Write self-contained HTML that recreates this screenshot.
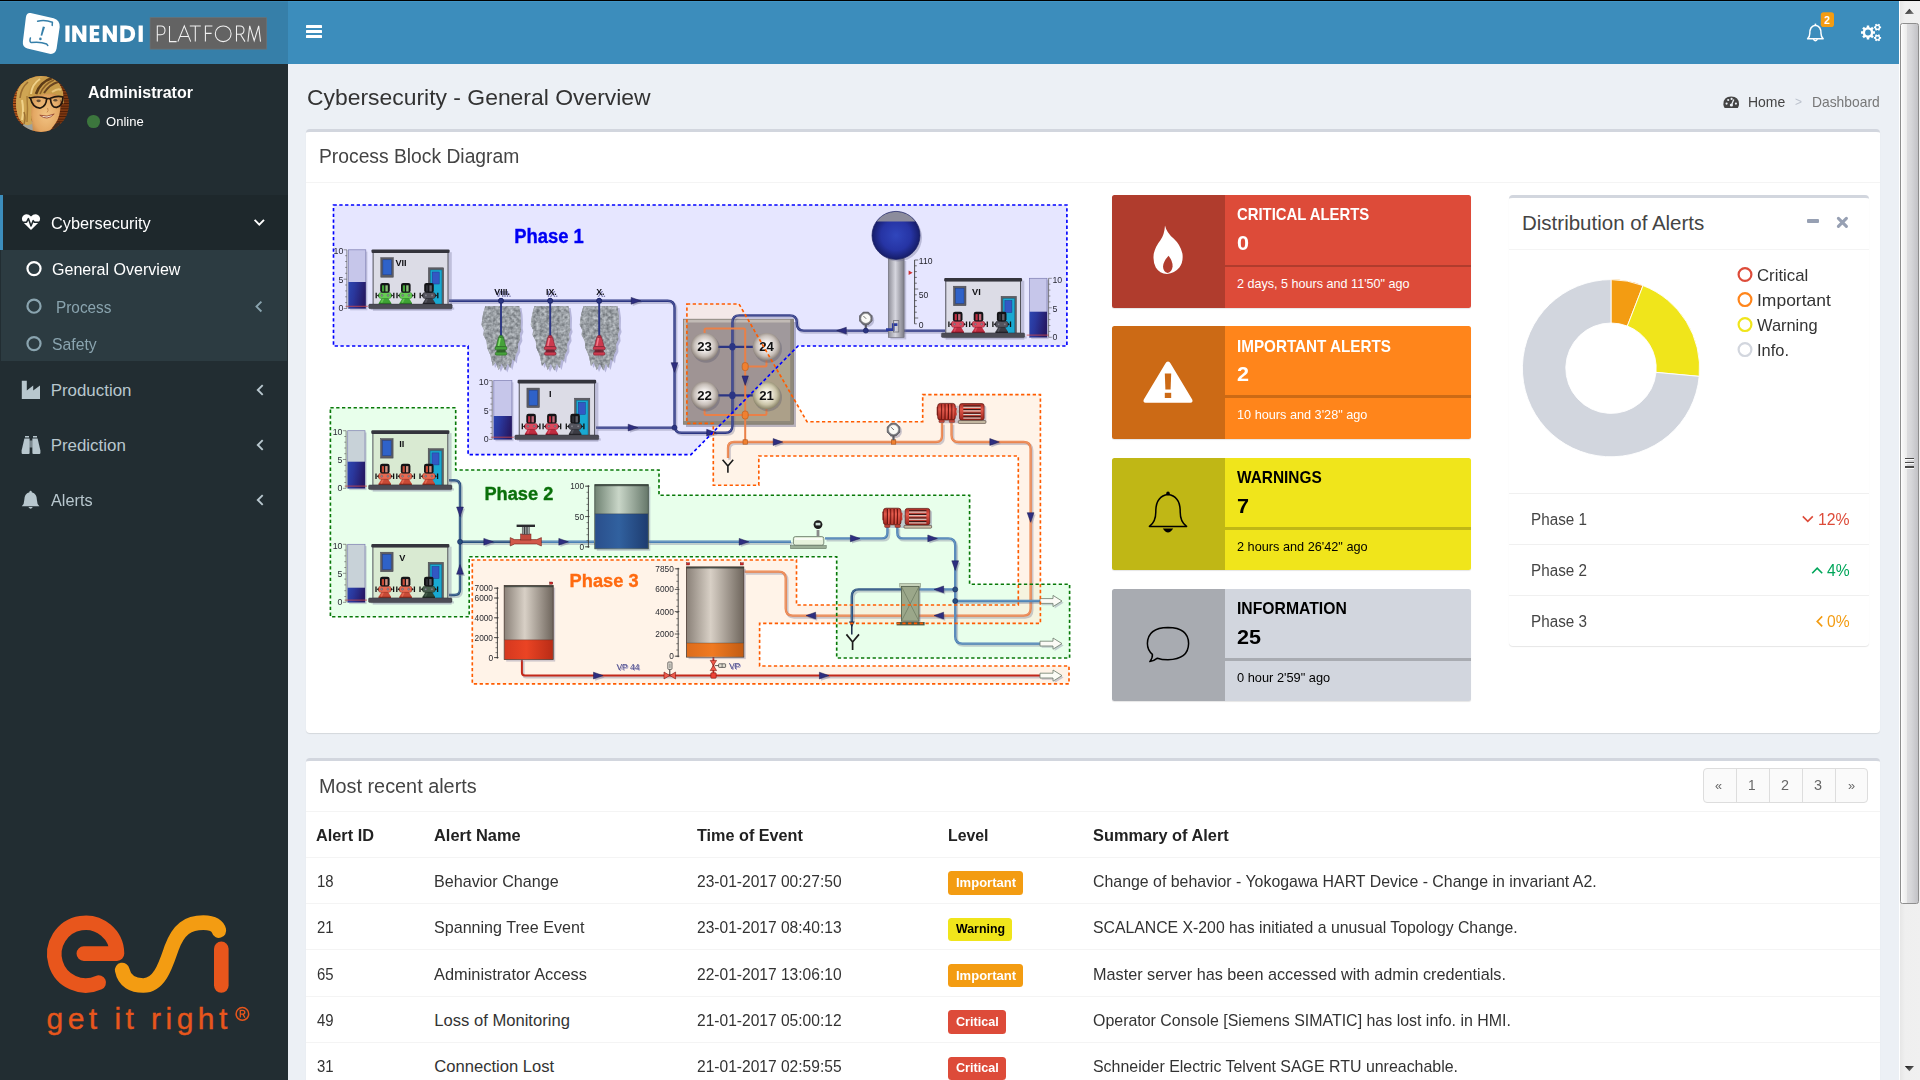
<!DOCTYPE html>
<html lang="en"><head><meta charset="utf-8"><title>INENDI Platform - Cybersecurity</title>
<style>
html,body{margin:0;padding:0;}
body{width:1920px;height:1080px;overflow:hidden;position:relative;background:#ecf0f5;font-family:"Liberation Sans",sans-serif;}
.t{position:absolute;white-space:pre;line-height:1;transform-origin:0 50%;display:block;}
.r{position:absolute;}
svg{position:absolute;left:0;top:0;overflow:visible;}
</style></head>
<body>
<div class="r" style="left:0.00px;top:0.00px;width:1899.00px;height:64.00px;background:#3c8dbc;"></div>
<div class="r" style="left:0.00px;top:0.00px;width:288.00px;height:64.00px;background:#367fa9;"></div>
<div class="r" style="left:288.00px;top:1.00px;width:1611.00px;height:1.00px;background:#4196c7;"></div>
<div class="r" style="left:0.00px;top:1.00px;width:288.00px;height:1.00px;background:#3b88b5;"></div>
<div class="r" style="left:0.00px;top:64.00px;width:288.00px;height:1016.00px;background:#222d32;"></div>
<div class="r" style="left:0.00px;top:195.00px;width:288.00px;height:55.00px;background:#1e282c;"></div>
<div class="r" style="left:0.00px;top:195.00px;width:3.00px;height:55.00px;background:#3c8dbc;"></div>
<div class="r" style="left:1.25px;top:250.00px;width:285.50px;height:111.40px;background:#2c3b41;"></div>
<div class="r" style="left:306.00px;top:129.00px;width:1574.00px;height:603.50px;background:#fff;border-radius:4px;box-shadow:0 1px 1px rgba(0,0,0,0.1);border-top:3px solid #d2d6de;box-sizing:border-box;"></div>
<div class="r" style="left:306.00px;top:182.00px;width:1574.00px;height:1.00px;background:#f4f4f4;"></div>
<div class="r" style="left:306.00px;top:758.00px;width:1574.00px;height:340.00px;background:#fff;border-radius:4px;box-shadow:0 1px 1px rgba(0,0,0,0.1);border-top:3px solid #d2d6de;box-sizing:border-box;"></div>
<div class="r" style="left:306.00px;top:811.00px;width:1574.00px;height:1.00px;background:#f4f4f4;"></div>
<div class="r" style="left:1508.50px;top:195.00px;width:360.00px;height:451.00px;background:#fff;border-radius:4px;box-shadow:0 1px 1px rgba(0,0,0,0.1);border-top:3px solid #d2d6de;box-sizing:border-box;"></div>
<div class="r" style="left:1508.50px;top:248.50px;width:360.00px;height:1.00px;background:#f4f4f4;"></div>
<div class="r" style="left:1508.50px;top:493.30px;width:360.00px;height:1.00px;background:#f0f0f0;"></div>
<div class="r" style="left:1508.50px;top:544.30px;width:360.00px;height:1.00px;background:#f0f0f0;"></div>
<div class="r" style="left:1508.50px;top:595.30px;width:360.00px;height:1.00px;background:#f0f0f0;"></div>
<svg width="1920" height="1080" viewBox="0 0 1920 1080"><path d="M30.6 13.1 L53.6 18.2 Q59.9 19.8 59.7 27 L56.6 48.6 Q55.4 54.6 49.6 53.8 L27.4 48.6 Q22.2 47.2 22.9 41.6 L25.9 17.2 Q26.8 12.4 30.6 13.1 Z" fill="#fff"/><path d="M37.6 21.2 Q45 19.6 52.4 22.2 L52.2 25.4" stroke="#367fa9" stroke-width="1.5" fill="none" stroke-linecap="round" stroke-linejoin="round"/><path d="M30.4 38 Q29.2 42 31.2 42.6 Q40 41.4 46.6 44 L47.8 45.4" stroke="#367fa9" stroke-width="1.5" fill="none" stroke-linecap="round" stroke-linejoin="round"/><path d="M42.8 26.6 L40.6 35.6 L42.2 35.8 L45 26.9 Z" fill="#367fa9"/><circle cx="40.4" cy="38.9" r="1.3" fill="#367fa9"/><g fill="#fff"><rect x="65.4" y="25.5" width="4.1" height="16.4"/><path d="M72.2 41.9 V25.5 H76.3 L82.30000000000001 35.1 V25.5 H86.4 V41.9 H82.30000000000001 L76.3 32.3 V41.9 Z"/><path d="M89.8 25.5 H99.3 V29.1 H93.89999999999999 V31.9 H98.7 V35.5 H93.89999999999999 V38.3 H99.3 V41.9 H89.8 Z"/><path d="M102.7 41.9 V25.5 H106.8 L112.80000000000001 35.1 V25.5 H116.9 V41.9 H112.80000000000001 L106.8 32.3 V41.9 Z"/><path fill-rule="evenodd" d="M120.3 25.5 H125.89999999999999 Q135.2 25.5 135.2 33.7 Q135.2 41.9 125.89999999999999 41.9 H120.3 Z M124.39999999999999 29.2 V38.199999999999996 H126.1 Q130.89999999999998 38.199999999999996 130.89999999999998 33.7 Q130.89999999999998 29.2 126.1 29.2 Z"/><rect x="138.6" y="25.5" width="4.2" height="16.4"/></g><rect x="150.1" y="17.7" width="116.4" height="31.4" fill="#636363" stroke="#707070" stroke-width="0.7"/><g fill="none" stroke="#f2f2f2" stroke-width="1.05" stroke-linejoin="miter"><path d="M157.3 41.6 V25.9 H161 Q165 25.9 165 30.299999999999997 Q165 34.7 161 34.7 H157.3"/><path d="M169.5 25.9 V41.6 H176.6"/><path d="M177.9 41.6 L184.3 25.9 L190.7 41.6 M180.1 36.4 H188.5"/><path d="M189.8 25.9 H200.8 M195.3 25.9 V41.6"/><path d="M205.4 41.6 V25.9 H212.4 M205.4 33.35 H211.6"/><ellipse cx="223.2" cy="33.75" rx="7.9" ry="7.850000000000001"/><path d="M236.5 41.6 V25.9 H240 Q244 25.9 244 30.099999999999998 Q244 34.3 240 34.3 H236.5 M240.4 34.3 L245 41.6"/><path d="M247.9 41.6 L249.7 25.9 L254.2 40.6 L258.7 25.9 L260.5 41.6"/></g></svg>
<div class="r" style="left:306.00px;top:25.00px;width:16.00px;height:3.00px;background:#fff;border-radius:.6px;"></div>
<div class="r" style="left:306.00px;top:30.00px;width:16.00px;height:3.00px;background:#fff;border-radius:.6px;"></div>
<div class="r" style="left:306.00px;top:35.00px;width:16.00px;height:3.00px;background:#fff;border-radius:.6px;"></div>
<svg width="1920" height="1080" viewBox="0 0 1920 1080"><g fill="none" stroke="#fff" stroke-width="1.5" stroke-linejoin="round"><path d="M1815.4 25.2 Q1809.6 26.2 1809.8 33.5 Q1809.8 36.8 1807.6 38.7 L1823.2 38.7 Q1821 36.8 1821 33.5 Q1821.2 26.2 1815.4 25.2 Z"/><path d="M1813.4 39.2 Q1815.4 42.2 1817.4 39.2" /></g><rect x="1814.7" y="23.6" width="1.5" height="2" fill="#fff"/><rect x="1820.8" y="12.2" width="13.2" height="14.8" rx="2.8" fill="#f39c12"/><path d="M1874.99 31.28 L1874.99 33.72 L1873.25 33.76 L1872.60 35.32 L1873.81 36.58 L1872.08 38.31 L1870.82 37.10 L1869.26 37.75 L1869.22 39.49 L1866.78 39.49 L1866.74 37.75 L1865.18 37.10 L1863.92 38.31 L1862.19 36.58 L1863.40 35.32 L1862.75 33.76 L1861.01 33.72 L1861.01 31.28 L1862.75 31.24 L1863.40 29.68 L1862.19 28.42 L1863.92 26.69 L1865.18 27.90 L1866.74 27.25 L1866.78 25.51 L1869.22 25.51 L1869.26 27.25 L1870.82 27.90 L1872.08 26.69 L1873.81 28.42 L1872.60 29.68 L1873.25 31.24 Z M1870.90 32.50 A2.9 2.9 0 1 0 1865.10 32.50 A2.9 2.9 0 1 0 1870.90 32.50 Z" fill="#fff" fill-rule="evenodd"/><path d="M1881.10 26.46 L1881.10 28.14 L1880.17 28.17 L1879.59 29.18 L1880.03 30.00 L1878.57 30.84 L1878.08 30.05 L1876.92 30.05 L1876.43 30.84 L1874.97 30.00 L1875.41 29.18 L1874.83 28.17 L1873.90 28.14 L1873.90 26.46 L1874.83 26.43 L1875.41 25.42 L1874.97 24.60 L1876.43 23.76 L1876.92 24.55 L1878.08 24.55 L1878.57 23.76 L1880.03 24.60 L1879.59 25.42 L1880.17 26.43 Z M1878.90 27.30 A1.4 1.4 0 1 0 1876.10 27.30 A1.4 1.4 0 1 0 1878.90 27.30 Z" fill="#fff" fill-rule="evenodd"/><path d="M1881.10 36.96 L1881.10 38.64 L1880.17 38.67 L1879.59 39.68 L1880.03 40.50 L1878.57 41.34 L1878.08 40.55 L1876.92 40.55 L1876.43 41.34 L1874.97 40.50 L1875.41 39.68 L1874.83 38.67 L1873.90 38.64 L1873.90 36.96 L1874.83 36.93 L1875.41 35.92 L1874.97 35.10 L1876.43 34.26 L1876.92 35.05 L1878.08 35.05 L1878.57 34.26 L1880.03 35.10 L1879.59 35.92 L1880.17 36.93 Z M1878.90 37.80 A1.4 1.4 0 1 0 1876.10 37.80 A1.4 1.4 0 1 0 1878.90 37.80 Z" fill="#fff" fill-rule="evenodd"/><path d="M1723.4 104.2 Q1723.4 96.6 1731.2 96.6 Q1739 96.6 1739 104.2 Q1739 106.6 1737.8 108 L1724.6 108 Q1723.4 106.6 1723.4 104.2 Z" fill="#444"/><circle cx="1726.6" cy="103.6" r="1.1" fill="#ecf0f5"/><circle cx="1728.2" cy="100" r="1.1" fill="#ecf0f5"/><circle cx="1731.6" cy="98.9" r="1.1" fill="#ecf0f5"/><circle cx="1735.9" cy="103.6" r="1.1" fill="#ecf0f5"/><path d="M1733.8 99.4 L1731.9 104" stroke="#ecf0f5" stroke-width="1.3"/><circle cx="1731.4" cy="105" r="1.6" fill="#ecf0f5"/><path d="M1838.4 218.4 L1846.4 226.4 M1846.4 218.4 L1838.4 226.4" stroke="#97a0b3" stroke-width="3.1" stroke-linecap="round"/></svg>
<span class="t" style="left:1824.2px;top:16.0px;font-size:10.40px;color:#fff;font-weight:bold;">2</span>
<svg width="1920" height="1080" viewBox="0 0 1920 1080"><defs><clipPath id="avc"><circle cx="40.9" cy="104" r="28"/></clipPath><filter id="avb" x="-10%" y="-10%" width="120%" height="120%"><feGaussianBlur stdDeviation="0.7"/></filter><filter id="avb2" x="-10%" y="-10%" width="120%" height="120%"><feGaussianBlur stdDeviation="0.35"/></filter><radialGradient id="avskin" cx="52%" cy="55%" r="60%"><stop offset="0" stop-color="#f2c483"/><stop offset="0.7" stop-color="#e4a864"/><stop offset="1" stop-color="#c98848"/></radialGradient><linearGradient id="avhair" x1="0" x2="1" y1="0" y2="1"><stop offset="0" stop-color="#c79a48"/><stop offset="0.5" stop-color="#d8b060"/><stop offset="1" stop-color="#a87830"/></linearGradient><pattern id="avbrick" width="8" height="2.6" patternUnits="userSpaceOnUse"><rect width="8" height="2.6" fill="#b4561c"/><rect y="1.8" width="8" height="0.8" fill="#4e1e08"/></pattern></defs><g clip-path="url(#avc)"><rect x="12" y="75" width="58" height="58" fill="url(#avbrick)"/><rect x="52" y="75" width="18" height="58" fill="#3a1404" fill-opacity="0.45"/><g filter="url(#avb)"><path d="M17 92 Q22 76 42 75.5 Q58 76 63 92 L64 104 Q58 96 52 94 L34 96 L31 124 Q26 128 20 120 Q14 110 17 92 Z" fill="url(#avhair)"/><path d="M22 126 Q28 118 33 122 L34 134 L20 134 Z" fill="#9ea29c"/><path d="M50 134 L55 124 L60 122 L62 134 Z" fill="#3a2a22"/><path d="M31 98 Q32 92 46 92 Q60 92 60.5 102 Q61 116 55 124 Q50 131 47 133 L33 133 L32 120 Q30 110 31 98 Z" fill="url(#avskin)"/><path d="M17 96 Q18 84 30 80 Q36 88 33 100 Q30 112 32 124 Q24 128 19 118 Q15 108 17 96 Z" fill="#cfa552"/><path d="M22 100 Q24 110 22 120" stroke="#f0d28a" stroke-width="2" fill="none"/><path d="M27 96 Q28 108 27 122" stroke="#a87a34" stroke-width="1.4" fill="none"/><path d="M28 96 Q30 80 44 77 Q58 77 62 90 L63 97 Q54 92 44 94 Q34 96 28 96 Z" fill="#c89c4a"/><path d="M36 94 Q40 82 52 78" stroke="#5c3a18" stroke-width="2.6" fill="none"/><path d="M44 93 Q50 84 58 82" stroke="#6a4420" stroke-width="2" fill="none"/><path d="M31 94 Q32 84 40 79" stroke="#efd088" stroke-width="2" fill="none"/><path d="M52 92 Q58 88 61 90" stroke="#e8c47a" stroke-width="2" fill="none"/><path d="M40 94 Q44 84 54 80" stroke="#8a5e28" stroke-width="1.6" fill="none"/><path d="M20 98 Q21 88 28 82" stroke="#9a6e30" stroke-width="1.6" fill="none"/><path d="M24 112 Q26 118 24 124" stroke="#9a6e30" stroke-width="1.4" fill="none"/></g><g filter="url(#avb2)"><ellipse cx="38.6" cy="100.8" rx="2.2" ry="1.4" fill="#3a2a1c"/><ellipse cx="55.4" cy="100.2" rx="2" ry="1.3" fill="#3a2a1c"/><path d="M30.4 98 Q38 95.8 46.6 98.4 Q46.4 106 40.6 108 Q33 108.6 30.4 98 Z" fill="#f0c080" fill-opacity="0.25" stroke="#241810" stroke-width="1.7"/><path d="M50.4 98.2 Q57 95.4 63 97 Q62.6 106 56.6 107.4 Q51 107.6 50.4 98.2 Z" fill="#f0c080" fill-opacity="0.25" stroke="#241810" stroke-width="1.7"/><path d="M46.6 99 Q48.6 98.2 50.4 99" stroke="#241810" stroke-width="1.5" fill="none"/><path d="M30.4 98 L28.6 97.4" stroke="#241810" stroke-width="1.5"/><path d="M47.6 108 Q49 111 47 112.4" stroke="#c88c50" stroke-width="1" fill="none"/><path d="M39.8 115.2 Q47 121.4 54.2 114 Q47 117.6 39.8 115.2 Z" fill="#fff6e6" stroke="#9a4a32" stroke-width="0.9"/></g></g></svg>
<span class="t" style="left:87.5px;top:85.0px;font-size:16.90px;color:#fff;font-weight:bold;transform:scaleX(0.9477);">Administrator</span>
<div class="r" style="left:87.30px;top:115.00px;width:12.60px;height:12.60px;background:#3c763d;border-radius:50%;"></div>
<span class="t" style="left:106.0px;top:116.0px;font-size:12.90px;color:#fff;transform:scaleX(1.0110);">Online</span>
<span class="t" style="left:51.0px;top:216.0px;font-size:16.90px;color:#fff;transform:scaleX(0.9661);">Cybersecurity</span>
<span class="t" style="left:52.0px;top:262.0px;font-size:16.90px;color:#fff;transform:scaleX(0.9502);">General Overview</span>
<span class="t" style="left:55.5px;top:300.0px;font-size:16.90px;color:#8aa4af;transform:scaleX(0.9092);">Process</span>
<span class="t" style="left:52.0px;top:337.0px;font-size:16.90px;color:#8aa4af;transform:scaleX(0.9330);">Safety</span>
<span class="t" style="left:50.7px;top:383.0px;font-size:16.90px;color:#b8c7ce;">Production</span>
<span class="t" style="left:50.7px;top:438.0px;font-size:16.90px;color:#b8c7ce;">Prediction</span>
<span class="t" style="left:50.7px;top:493.0px;font-size:16.90px;color:#b8c7ce;transform:scaleX(0.9630);">Alerts</span>
<svg width="1920" height="1080" viewBox="0 0 1920 1080"><path d="M31 230 L23.4 222.4 Q20.4 218.4 23.4 215.4 Q27.4 212.6 31 216.6 Q34.6 212.6 38.6 215.4 Q41.6 218.4 38.6 222.4 Z" fill="#fff"/><path d="M21.5 222.2 L26.6 222.2 L28.4 218.6 L31 226 L33.2 220.6 L34.4 222.2 L40.5 222.2" fill="none" stroke="#1e282c" stroke-width="1.5" stroke-linejoin="round"/><circle cx="34" cy="268.6" r="6.55" fill="none" stroke="#fff" stroke-width="2.2"/><circle cx="34" cy="306.2" r="6.55" fill="none" stroke="#8aa4af" stroke-width="2.2"/><circle cx="34" cy="343.6" r="6.55" fill="none" stroke="#8aa4af" stroke-width="2.2"/><path d="M254.6 219.8 L259.3 224.6 L264 219.8" fill="none" stroke="#fff" stroke-width="1.9"/><path d="M261.4 301.70000000000005 L256.5 306.6 L261.4 311.5" fill="none" stroke="#8aa4af" stroke-width="1.9"/><path d="M262.7 385.1 L257.8 390 L262.7 394.9" fill="none" stroke="#b8c7ce" stroke-width="1.9"/><path d="M262.7 440.1 L257.8 445 L262.7 449.9" fill="none" stroke="#b8c7ce" stroke-width="1.9"/><path d="M262.7 495.1 L257.8 500 L262.7 504.9" fill="none" stroke="#b8c7ce" stroke-width="1.9"/><path d="M21.8 399 V380.8 H26.8 V390.4 L33.2 385.6 V390.4 L40 385.6 V399 Z" fill="#b8c7ce"/><path d="M25 436 H29 V437.6 H25 Z M33 436 H37 V437.6 H33 Z" fill="#b8c7ce"/><path d="M24.4 438.6 H29.6 V453 Q29.6 454 28.6 454 H22.6 Q21.6 454 21.6 453 V450.4 Z" fill="#b8c7ce"/><path d="M37.6 438.6 H32.4 V453 Q32.4 454 33.4 454 H39.4 Q40.4 454 40.4 453 V450.4 Z" fill="#b8c7ce"/><path d="M29.6 440.6 H30.6 V447.4 H29.6 Z M31.4 440.6 H32.4 V447.4 H31.4 Z" fill="#b8c7ce"/><path d="M30.6 490.8 Q31.8 490.8 31.8 492.2 Q37 493.6 37 500.4 Q37 504.4 39.4 506.2 H21.8 Q24.2 504.4 24.2 500.4 Q24.2 493.6 29.4 492.2 Q29.4 490.8 30.6 490.8 Z" fill="#b8c7ce"/><path d="M28.4 507 Q30.6 510.6 32.8 507 Z" fill="#b8c7ce"/></svg>
<svg width="1920" height="1080" viewBox="0 0 1920 1080"><path d="M83.8 953.6 H117.0 A31.35 31.35 0 1 0 98.7 982.6" fill="none" stroke="#e8561c" stroke-width="14.6" stroke-linecap="round" stroke-linejoin="round"/><path d="M122.2 970 C124.5 981.5 133 985.6 143.5 985.5 C160 985.3 166 964 171.6 948 C178.5 929 188 922.6 203.4 922.6 C213.5 922.8 217.6 926 218.9 930.6" fill="none" stroke="#f39c12" stroke-width="14.6" stroke-linecap="round"/><path d="M221.3 948.8 V985.5" stroke="#e8561c" stroke-width="14.6" stroke-linecap="round"/><circle cx="242.4" cy="1013.9" r="6.3" fill="none" stroke="#e8561c" stroke-width="1.5"/><path d="M240.3 1017.6 V1010.4 H242.6 Q244.8 1010.4 244.8 1012.4 Q244.8 1014.2 242.6 1014.2 H240.3 M242.8 1014.2 L245 1017.6" fill="none" stroke="#e8561c" stroke-width="1.3"/></svg>
<span class="t" style="left:46.6px;top:1003.5px;font-size:30px;letter-spacing:4.45px;color:#e8561c;-webkit-text-stroke:0.35px #e8561c;">get it right</span>
<span class="t" style="left:307.2px;top:87.0px;font-size:22.20px;color:#333;transform:scaleX(1.0321);">Cybersecurity - General Overview</span>
<span class="t" style="left:1748.3px;top:95.0px;font-size:14.30px;color:#444;transform:scaleX(0.9778);">Home</span>
<span class="t" style="left:1795.0px;top:96.0px;font-size:12.10px;color:#bcc2cd;transform:scaleX(0.9906);">&gt;</span>
<span class="t" style="left:1812.3px;top:95.0px;font-size:14.30px;color:#777;transform:scaleX(0.9677);">Dashboard</span>
<span class="t" style="left:319.3px;top:147.0px;font-size:19.90px;color:#444;transform:scaleX(0.9689);">Process Block Diagram</span>
<div class="r" style="left:1112.00px;top:195.00px;width:359.00px;height:112.50px;background:#dd4b39;border-radius:2.5px;box-shadow:0 1px 1px rgba(0,0,0,0.1);"></div>
<div class="r" style="left:1112.00px;top:195.00px;width:112.70px;height:112.50px;background:rgba(0,0,0,0.2);border-radius:2.5px 0 0 2.5px;"></div>
<div class="r" style="left:1224.70px;top:264.90px;width:246.30px;height:1.80px;background:rgba(0,0,0,0.2);"></div>
<span class="t" style="left:1237.0px;top:206.0px;font-size:16.40px;color:#fff;font-weight:bold;transform:scaleX(0.9069);">CRITICAL ALERTS</span>
<span class="t" style="left:1237.0px;top:233.0px;font-size:20.20px;color:#fff;font-weight:bold;transform:scaleX(1.0682);">0</span>
<span class="t" style="left:1237.0px;top:278.0px;font-size:12.60px;color:#fff;">2 days, 5 hours and 11'50" ago</span>
<div class="r" style="left:1112.00px;top:326.25px;width:359.00px;height:112.50px;background:#ff851b;border-radius:2.5px;box-shadow:0 1px 1px rgba(0,0,0,0.1);"></div>
<div class="r" style="left:1112.00px;top:326.25px;width:112.70px;height:112.50px;background:rgba(0,0,0,0.2);border-radius:2.5px 0 0 2.5px;"></div>
<div class="r" style="left:1224.70px;top:395.30px;width:246.30px;height:2.60px;background:rgba(0,0,0,0.2);"></div>
<span class="t" style="left:1237.0px;top:338.0px;font-size:16.40px;color:#fff;font-weight:bold;transform:scaleX(0.9288);">IMPORTANT ALERTS</span>
<span class="t" style="left:1237.0px;top:364.0px;font-size:20.20px;color:#fff;font-weight:bold;transform:scaleX(1.0682);">2</span>
<span class="t" style="left:1237.0px;top:409.0px;font-size:12.60px;color:#fff;transform:scaleX(1.0077);">10 hours and 3'28" ago</span>
<div class="r" style="left:1112.00px;top:457.50px;width:359.00px;height:112.50px;background:#f0e51b;border-radius:2.5px;box-shadow:0 1px 1px rgba(0,0,0,0.1);"></div>
<div class="r" style="left:1112.00px;top:457.50px;width:112.70px;height:112.50px;background:rgba(0,0,0,0.2);border-radius:2.5px 0 0 2.5px;"></div>
<div class="r" style="left:1224.70px;top:526.90px;width:246.30px;height:3.20px;background:rgba(0,0,0,0.2);"></div>
<span class="t" style="left:1237.0px;top:469.0px;font-size:16.40px;color:#000;font-weight:bold;transform:scaleX(0.9402);">WARNINGS</span>
<span class="t" style="left:1237.0px;top:496.0px;font-size:20.20px;color:#000;font-weight:bold;transform:scaleX(1.0682);">7</span>
<span class="t" style="left:1237.0px;top:541.0px;font-size:12.60px;color:#000;transform:scaleX(1.0093);">2 hours and 26'42" ago</span>
<div class="r" style="left:1112.00px;top:588.75px;width:359.00px;height:112.50px;background:#d2d6de;border-radius:2.5px;box-shadow:0 1px 1px rgba(0,0,0,0.1);"></div>
<div class="r" style="left:1112.00px;top:588.75px;width:112.70px;height:112.50px;background:rgba(0,0,0,0.2);border-radius:2.5px 0 0 2.5px;"></div>
<div class="r" style="left:1224.70px;top:658.00px;width:246.30px;height:3.00px;background:rgba(0,0,0,0.2);"></div>
<span class="t" style="left:1237.0px;top:600.0px;font-size:16.40px;color:#000;font-weight:bold;transform:scaleX(0.9591);">INFORMATION</span>
<span class="t" style="left:1237.0px;top:627.0px;font-size:20.20px;color:#000;font-weight:bold;transform:scaleX(1.0682);">25</span>
<span class="t" style="left:1237.0px;top:672.0px;font-size:12.60px;color:#000;transform:scaleX(1.0178);">0 hour 2'59" ago</span>
<svg width="1920" height="1080" viewBox="0 0 1920 1080"><path d="M1165 225.4 Q1166.6 232.6 1173.6 238.4 Q1180.4 244.6 1182.4 253.4 Q1183.6 261.6 1179.4 267.6 Q1174.6 273.4 1167 273.9 Q1159.6 273.6 1155.8 267.4 Q1152.6 261.4 1153.8 253.6 Q1155.4 246.4 1160.4 240.2 Q1164.4 234.6 1165 225.4 Z" fill="#fff"/><path d="M1168.6 255.8 Q1172.8 261.4 1172.6 266.4 Q1171.8 272.2 1167.6 272.9 Q1163.4 272.2 1163 266.8 Q1163.2 261.4 1168.6 255.8 Z" fill="#b13c2e"/><path d="M1168 361.5 Q1169.6 361.5 1170.6 363.4 L1192.2 399.6 Q1193.4 402.6 1190.4 402.8 L1145.6 402.8 Q1142.6 402.6 1143.8 399.6 L1165.4 363.4 Q1166.4 361.5 1168 361.5 Z" fill="#fff"/><path d="M1164.8 373.4 H1171.2 L1170.6 389.6 H1165.4 Z" fill="#cc6a16"/><rect x="1164.8" y="392.8" width="6.4" height="5.2" fill="#cc6a16"/><g fill="none" stroke="#000" stroke-width="1.5" stroke-linejoin="round"><path d="M1168 494.4 Q1155.6 496 1155.8 512 Q1155.8 522 1149.4 526.4 H1186.6 Q1180.2 522 1180.2 512 Q1180.4 496 1168 494.4 Z"/></g><circle cx="1168" cy="493.4" r="1.8" fill="#000"/><path d="M1162.8 528.6 Q1168 536.6 1173.2 528.6 Z" fill="#000"/><path d="M1168 627.6 Q1188.4 627.8 1188.6 643.6 Q1188.4 659.4 1168 659.8 Q1161.6 659.8 1157.4 658.2 Q1153.6 661.2 1149.8 661.6 Q1152.8 657.8 1152.4 654.4 Q1147.4 650.2 1147.4 643.6 Q1147.8 627.8 1168 627.6 Z" fill="none" stroke="#000" stroke-width="1.5" stroke-linejoin="round"/></svg>
<span class="t" style="left:1522.0px;top:213.0px;font-size:20.50px;color:#444;">Distribution of Alerts</span>
<div class="r" style="left:1806.50px;top:219.30px;width:12.00px;height:3.40px;background:#97a0b3;border-radius:1px;"></div>
<svg width="1920" height="1080" viewBox="0 0 1920 1080"><path d="M1611.00 279.60 A88.6 88.6 0 0 1 1643.01 285.58 L1627.33 326.05 A45.2 45.2 0 0 0 1611.00 323.00 Z" fill="#f39c12" stroke="#fff" stroke-width="0.9"/><path d="M1643.01 285.58 A88.6 88.6 0 0 1 1699.22 376.37 L1656.01 372.37 A45.2 45.2 0 0 0 1627.33 326.05 Z" fill="#f0e51b" stroke="#fff" stroke-width="0.9"/><path d="M1699.22 376.37 A88.6 88.6 0 1 1 1611.00 279.60 L1611.00 323.00 A45.2 45.2 0 1 0 1656.01 372.37 Z" fill="#d2d6de" stroke="#fff" stroke-width="0.9"/><circle cx="1745" cy="274.5" r="6.4" fill="none" stroke="#dd4b39" stroke-width="2.2"/><circle cx="1745" cy="299.6" r="6.4" fill="none" stroke="#ff851b" stroke-width="2.2"/><circle cx="1745" cy="324.6" r="6.4" fill="none" stroke="#f0e51b" stroke-width="2.2"/><circle cx="1745" cy="349.6" r="6.4" fill="none" stroke="#d2d6de" stroke-width="2.2"/><path d="M1802.8 516.4 L1807.8 521.4 L1812.8 516.4" fill="none" stroke="#dd4b39" stroke-width="1.6"/><path d="M1812.2 573.2 L1817.2 568.2 L1822.2 573.2" fill="none" stroke="#00a65a" stroke-width="1.6"/><path d="M1822.2 616.4 L1817.2 621.4 L1822.2 626.4" fill="none" stroke="#f39c12" stroke-width="1.6"/></svg>
<span class="t" style="left:1757.0px;top:267.0px;font-size:17.00px;color:#333;transform:scaleX(0.9876);">Critical</span>
<span class="t" style="left:1757.0px;top:292.0px;font-size:17.00px;color:#333;transform:scaleX(1.0278);">Important</span>
<span class="t" style="left:1757.0px;top:317.0px;font-size:17.00px;color:#333;transform:scaleX(0.9654);">Warning</span>
<span class="t" style="left:1757.0px;top:342.0px;font-size:17.00px;color:#333;transform:scaleX(0.9675);">Info.</span>
<span class="t" style="left:1530.7px;top:511.0px;font-size:17.30px;color:#444;transform:scaleX(0.8822);">Phase 1</span>
<span class="t" style="left:1530.7px;top:562.0px;font-size:17.30px;color:#444;transform:scaleX(0.8822);">Phase 2</span>
<span class="t" style="left:1530.7px;top:613.0px;font-size:17.30px;color:#444;transform:scaleX(0.8822);">Phase 3</span>
<span class="t" style="left:1817.7px;top:512.0px;font-size:16.90px;color:#dd4b39;transform:scaleX(0.9343);">12%</span>
<span class="t" style="left:1826.7px;top:563.0px;font-size:16.90px;color:#00a65a;transform:scaleX(0.9253);">4%</span>
<span class="t" style="left:1826.7px;top:614.0px;font-size:16.90px;color:#f39c12;transform:scaleX(0.9253);">0%</span>
<span class="t" style="left:319.3px;top:776.0px;font-size:20.50px;color:#444;transform:scaleX(0.9679);">Most recent alerts</span>
<div class="r" style="left:306.00px;top:857.00px;width:1574.00px;height:1.00px;background:#f4f4f4;"></div>
<div class="r" style="left:306.00px;top:903.00px;width:1574.00px;height:1.00px;background:#f4f4f4;"></div>
<div class="r" style="left:306.00px;top:949.30px;width:1574.00px;height:1.00px;background:#f4f4f4;"></div>
<div class="r" style="left:306.00px;top:996.00px;width:1574.00px;height:1.00px;background:#f4f4f4;"></div>
<div class="r" style="left:306.00px;top:1042.20px;width:1574.00px;height:1.00px;background:#f4f4f4;"></div>
<span class="t" style="left:316.0px;top:828.0px;font-size:16.60px;color:#222;font-weight:bold;transform:scaleX(0.9825);">Alert ID</span>
<span class="t" style="left:434.3px;top:828.0px;font-size:16.60px;color:#222;font-weight:bold;transform:scaleX(0.9892);">Alert Name</span>
<span class="t" style="left:697.4px;top:828.0px;font-size:16.60px;color:#222;font-weight:bold;transform:scaleX(0.9756);">Time of Event</span>
<span class="t" style="left:948.0px;top:828.0px;font-size:16.60px;color:#222;font-weight:bold;transform:scaleX(0.9541);">Level</span>
<span class="t" style="left:1093.2px;top:828.0px;font-size:16.60px;color:#222;font-weight:bold;transform:scaleX(0.9858);">Summary of Alert</span>
<span class="t" style="left:316.7px;top:874.0px;font-size:16.60px;color:#333;transform:scaleX(0.8991);">18</span>
<span class="t" style="left:434.3px;top:874.0px;font-size:16.60px;color:#333;transform:scaleX(0.9722);">Behavior Change</span>
<span class="t" style="left:697.4px;top:874.0px;font-size:16.60px;color:#333;transform:scaleX(0.9381);">23-01-2017 00:27:50</span>
<div class="r" style="left:948.00px;top:871.20px;width:75.00px;height:23.40px;background:#f39c12;border-radius:3.5px;"></div>
<span class="t" style="left:955.5px;top:877.0px;font-size:12.50px;color:#fff;font-weight:bold;transform:scaleX(1.0409);">Important</span>
<span class="t" style="left:1093.2px;top:874.0px;font-size:16.60px;color:#333;transform:scaleX(0.9573);">Change of behavior - Yokogawa HART Device - Change in invariant A2.</span>
<span class="t" style="left:316.7px;top:920.0px;font-size:16.60px;color:#333;transform:scaleX(0.8991);">21</span>
<span class="t" style="left:434.3px;top:920.0px;font-size:16.60px;color:#333;transform:scaleX(0.9701);">Spanning Tree Event</span>
<span class="t" style="left:697.4px;top:920.0px;font-size:16.60px;color:#333;transform:scaleX(0.9381);">23-01-2017 08:40:13</span>
<div class="r" style="left:948.00px;top:917.55px;width:64.00px;height:23.40px;background:#f0e51b;border-radius:3.5px;"></div>
<span class="t" style="left:955.5px;top:923.0px;font-size:12.50px;color:#000;font-weight:bold;transform:scaleX(0.9893);">Warning</span>
<span class="t" style="left:1093.2px;top:920.0px;font-size:16.60px;color:#333;transform:scaleX(0.9518);">SCALANCE X-200 has initiated a unusual Topology Change.</span>
<span class="t" style="left:316.7px;top:967.0px;font-size:16.60px;color:#333;transform:scaleX(0.8991);">65</span>
<span class="t" style="left:434.3px;top:967.0px;font-size:16.60px;color:#333;transform:scaleX(0.9872);">Administrator Access</span>
<span class="t" style="left:697.4px;top:967.0px;font-size:16.60px;color:#333;transform:scaleX(0.9381);">22-01-2017 13:06:10</span>
<div class="r" style="left:948.00px;top:963.90px;width:75.00px;height:23.40px;background:#f39c12;border-radius:3.5px;"></div>
<span class="t" style="left:955.5px;top:970.0px;font-size:12.50px;color:#fff;font-weight:bold;transform:scaleX(1.0409);">Important</span>
<span class="t" style="left:1093.2px;top:967.0px;font-size:16.60px;color:#333;transform:scaleX(0.9776);">Master server has been accessed with admin credentials.</span>
<span class="t" style="left:316.7px;top:1013.0px;font-size:16.60px;color:#333;transform:scaleX(0.8991);">49</span>
<span class="t" style="left:434.3px;top:1013.0px;font-size:16.60px;color:#333;">Loss of Monitoring</span>
<span class="t" style="left:697.4px;top:1013.0px;font-size:16.60px;color:#333;transform:scaleX(0.9381);">21-01-2017 05:00:12</span>
<div class="r" style="left:948.00px;top:1010.25px;width:57.70px;height:23.40px;background:#dd4b39;border-radius:3.5px;"></div>
<span class="t" style="left:955.5px;top:1016.0px;font-size:12.50px;color:#fff;font-weight:bold;transform:scaleX(1.0076);">Critical</span>
<span class="t" style="left:1093.2px;top:1013.0px;font-size:16.60px;color:#333;transform:scaleX(0.9608);">Operator Console [Siemens SIMATIC] has lost info. in HMI.</span>
<span class="t" style="left:316.7px;top:1059.0px;font-size:16.60px;color:#333;transform:scaleX(0.8991);">31</span>
<span class="t" style="left:434.3px;top:1059.0px;font-size:16.60px;color:#333;">Connection Lost</span>
<span class="t" style="left:697.4px;top:1059.0px;font-size:16.60px;color:#333;transform:scaleX(0.9381);">21-01-2017 02:59:55</span>
<div class="r" style="left:948.00px;top:1056.60px;width:57.70px;height:23.40px;background:#dd4b39;border-radius:3.5px;"></div>
<span class="t" style="left:955.5px;top:1062.0px;font-size:12.50px;color:#fff;font-weight:bold;transform:scaleX(1.0076);">Critical</span>
<span class="t" style="left:1093.2px;top:1059.0px;font-size:16.60px;color:#333;transform:scaleX(0.9597);">Schneider Electric Telvent SAGE RTU unreachable.</span>
<div class="r" style="left:1703.30px;top:767.70px;width:164.40px;height:35.60px;background:#fafafa;border:1px solid #ddd;border-radius:4px;box-sizing:border-box;"></div>
<div class="r" style="left:1735.70px;top:767.70px;width:1.00px;height:35.60px;background:#ddd;"></div>
<div class="r" style="left:1768.70px;top:767.70px;width:1.00px;height:35.60px;background:#ddd;"></div>
<div class="r" style="left:1801.70px;top:767.70px;width:1.00px;height:35.60px;background:#ddd;"></div>
<div class="r" style="left:1834.50px;top:767.70px;width:1.00px;height:35.60px;background:#ddd;"></div>
<span class="t" style="left:1715.3px;top:779.0px;font-size:13.50px;color:#666;transform:scaleX(0.9324);">«</span>
<span class="t" style="left:1747.7px;top:777.0px;font-size:15.40px;color:#666;transform:scaleX(0.8873);">1</span>
<span class="t" style="left:1780.7px;top:777.0px;font-size:15.40px;color:#666;transform:scaleX(0.9340);">2</span>
<span class="t" style="left:1814.0px;top:777.0px;font-size:15.40px;color:#666;transform:scaleX(0.9340);">3</span>
<span class="t" style="left:1847.6px;top:779.0px;font-size:13.50px;color:#666;transform:scaleX(0.9457);">»</span>
<svg width="1920" height="1080" viewBox="0 0 1920 1080" style="opacity:0.999"><defs>
<linearGradient id="gBlueLvl" x1="0" x2="1" y1="0" y2="0.25"><stop offset="0" stop-color="#2c46b0"/><stop offset="0.4" stop-color="#2a379c"/><stop offset="1" stop-color="#261a66"/></linearGradient>
<linearGradient id="gRock" x1="0" x2="1"><stop offset="0" stop-color="#8d9496"/><stop offset="0.5" stop-color="#a9b0b2"/><stop offset="1" stop-color="#7f8688"/></linearGradient>
<pattern id="pRock" width="7" height="9" patternUnits="userSpaceOnUse"><rect width="7" height="9" fill="none"/><rect x="1" y="1" width="1.4" height="2.6" fill="#6f7678" fill-opacity="0.35"/><rect x="4" y="5" width="1.4" height="2.6" fill="#c8cfd0" fill-opacity="0.45"/><rect x="5" y="0.5" width="1" height="1.6" fill="#5f6668" fill-opacity="0.3"/><rect x="2" y="6" width="1" height="1.6" fill="#d8dfe0" fill-opacity="0.4"/></pattern>
<linearGradient id="gMotor" x1="0" x2="0" y1="0" y2="1"><stop offset="0" stop-color="#a82a22"/><stop offset="0.35" stop-color="#e2584a"/><stop offset="1" stop-color="#9a221a"/></linearGradient>
<linearGradient id="gTankGreen" x1="0" x2="1"><stop offset="0" stop-color="#6f8272"/><stop offset="0.45" stop-color="#c9d6c8"/><stop offset="1" stop-color="#66786a"/></linearGradient>
<linearGradient id="gTankBlue" x1="0" x2="1"><stop offset="0" stop-color="#2a4f8c"/><stop offset="0.45" stop-color="#31619f"/><stop offset="1" stop-color="#1e3c70"/></linearGradient>
<linearGradient id="gTankGrey" x1="0" x2="1"><stop offset="0" stop-color="#8a8178"/><stop offset="0.42" stop-color="#d8d0c6"/><stop offset="1" stop-color="#6e655c"/></linearGradient>
<linearGradient id="gTankRed" x1="0" x2="1"><stop offset="0" stop-color="#d5381f"/><stop offset="0.45" stop-color="#ea4424"/><stop offset="1" stop-color="#b92c16"/></linearGradient>
<linearGradient id="gTankOrange" x1="0" x2="1"><stop offset="0" stop-color="#dd6c1c"/><stop offset="0.45" stop-color="#f07a22"/><stop offset="1" stop-color="#c25c14"/></linearGradient>
<linearGradient id="gStem" x1="0" x2="1"><stop offset="0" stop-color="#8e8e98"/><stop offset="0.45" stop-color="#d6d6de"/><stop offset="1" stop-color="#7c7c86"/></linearGradient>
<radialGradient id="gSphere" cx="0.5" cy="0.5" r="0.52"><stop offset="0" stop-color="#3046bc"/><stop offset="0.6" stop-color="#2634a4"/><stop offset="1" stop-color="#141a62"/></radialGradient>
<radialGradient id="gBall" cx="0.5" cy="0.47" r="0.53"><stop offset="0" stop-color="#ffffff"/><stop offset="0.3" stop-color="#f4f0ee"/><stop offset="0.7" stop-color="#c8c0ba"/><stop offset="1" stop-color="#8a8078"/></radialGradient>
<radialGradient id="gBall2" cx="0.5" cy="0.47" r="0.53"><stop offset="0" stop-color="#fffffa"/><stop offset="0.3" stop-color="#f4f0e2"/><stop offset="0.7" stop-color="#cac4a8"/><stop offset="1" stop-color="#8a8468"/></radialGradient>
<filter id="fRock" x="-5%" y="-5%" width="110%" height="110%" color-interpolation-filters="sRGB"><feTurbulence type="fractalNoise" baseFrequency="0.3" numOctaves="2" seed="11" result="n"/><feColorMatrix in="n" type="matrix" values="0.5 0 0 0 0.35  0.5 0 0 0 0.37  0.5 0 0 0 0.39  0 0 0 0 1" result="g"/><feComposite in="g" in2="SourceGraphic" operator="in"/></filter>
<clipPath id="cpBox"><rect x="683.4" y="319.2" width="110" height="105"/></clipPath>
</defs><polygon points="333.5,205.0 1066.9,205.0 1066.9,346.0 798.0,346.0 691.0,454.6 468.1,454.6 468.1,346.0 333.5,346.0" fill="#e6e6ff"/><polygon points="330.4,407.7 455.7,407.7 455.7,470.0 659.0,470.0 659.0,495.2 969.6,495.2 969.6,584.2 1069.6,584.2 1069.6,658.0 836.7,658.0 836.7,556.7 469.2,556.7 469.2,616.7 330.4,616.7" fill="#e6ffe9" fill-opacity="0.92"/><polygon points="686.9,304.0 739.0,304.0 807.0,421.7 922.7,421.7 922.7,394.6 1040.4,394.6 1040.4,623.3 759.6,623.3 759.6,666.0 1069.0,666.0 1069.0,683.8 472.3,683.8 472.3,560.0 796.5,560.0 796.5,605.0 1018.3,605.0 1018.3,456.0 758.8,456.0 758.8,485.2 713.3,485.2 713.3,423.3 686.9,423.3" fill="#ffe9d6" fill-opacity="0.55"/><rect x="686.0" y="322.0" width="110" height="105" fill="#5c5c84" fill-opacity="0.42"/><rect x="683.4" y="319.2" width="110" height="105" fill="#a69f98"/><g clip-path="url(#cpBox)"><polygon points="333.5,205.0 1066.9,205.0 1066.9,346.0 798.0,346.0 691.0,454.6 468.1,454.6 468.1,346.0 333.5,346.0" fill="#7070c8" fill-opacity="0.10"/><polygon points="686.9,304.0 739.0,304.0 807.0,421.7 922.7,421.7 922.7,394.6 1040.4,394.6 1040.4,623.3 759.6,623.3 759.6,666.0 1069.0,666.0 1069.0,683.8 472.3,683.8 472.3,560.0 796.5,560.0 796.5,605.0 1018.3,605.0 1018.3,456.0 758.8,456.0 758.8,485.2 713.3,485.2 713.3,423.3 686.9,423.3" fill="#a05a30" fill-opacity="0.07"/><polygon points="793.4,350.8 793.4,424.2 720.9,424.2" fill="#bcb47c" fill-opacity="0.30"/></g><path d="M685.0 424.2 V320.8 H793.4" fill="none" stroke="#c4beb8" stroke-opacity="0.9" stroke-width="3.2"/><path d="M791.8 319.2 V422.59999999999997 H683.4" fill="none" stroke="#8a8478" stroke-opacity="0.85" stroke-width="3.2"/><rect x="683.4" y="319.2" width="110" height="105" fill="none" stroke="#7e786e" stroke-width="0.7"/><path d="M449.0 300.8 L667.5 300.8 Q674.5 300.8 674.5 307.8 L674.5 425.7 Q674.5 432.7 681.5 432.7 L725.4 432.7 Q732.4 432.7 732.4 425.7 L732.4 322.4 Q732.4 315.4 739.4 315.4 L789.8 315.4 Q796.8 315.4 796.8 322.4 L796.8 323.6 Q796.8 330.6 803.8 330.6 L945.0 330.6" fill="none" stroke="#6b6b8c" stroke-opacity="0.33" stroke-width="2.8" transform="translate(1.5,1.7)"/><path d="M449.0 300.8 L667.5 300.8 Q674.5 300.8 674.5 307.8 L674.5 425.7 Q674.5 432.7 681.5 432.7 L725.4 432.7 Q732.4 432.7 732.4 425.7 L732.4 322.4 Q732.4 315.4 739.4 315.4 L789.8 315.4 Q796.8 315.4 796.8 322.4 L796.8 323.6 Q796.8 330.6 803.8 330.6 L945.0 330.6" fill="none" stroke="#2b3583" stroke-width="2.4"/><path d="M449.0 300.8 L667.5 300.8 Q674.5 300.8 674.5 307.8 L674.5 425.7 Q674.5 432.7 681.5 432.7 L725.4 432.7 Q732.4 432.7 732.4 425.7 L732.4 322.4 Q732.4 315.4 739.4 315.4 L789.8 315.4 Q796.8 315.4 796.8 322.4 L796.8 323.6 Q796.8 330.6 803.8 330.6 L945.0 330.6" fill="none" stroke="#ffffff" stroke-opacity="0.22" stroke-width="0.86" transform="translate(-0.2,-0.25)"/><path d="M596.0 427.6 L674.5 427.6" fill="none" stroke="#6b6b8c" stroke-opacity="0.33" stroke-width="2.8" transform="translate(1.5,1.7)"/><path d="M596.0 427.6 L674.5 427.6" fill="none" stroke="#2b3583" stroke-width="2.4"/><path d="M596.0 427.6 L674.5 427.6" fill="none" stroke="#ffffff" stroke-opacity="0.22" stroke-width="0.86" transform="translate(-0.2,-0.25)"/><path d="M716.0 346.8 L756.0 346.8" fill="none" stroke="#2b3583" stroke-width="2.2"/><path d="M716.0 395.4 L756.0 395.4" fill="none" stroke="#2b3583" stroke-width="2.2"/><path d="M704.6 336.0 L704.6 330.1 Q704.6 328.6 706.1 328.6 L743.7 328.6 Q745.2 328.6 745.2 330.1 L745.2 442.0" fill="none" stroke="#ea8048" stroke-width="2.0"/><path d="M766.5 358.0 L766.5 365.1 Q766.5 366.6 765.0 366.6 L745.2 366.6" fill="none" stroke="#ea8048" stroke-width="2.0"/><path d="M704.6 407.0 L704.6 413.5 Q704.6 415.0 706.1 415.0 L765.0 415.0 Q766.5 415.0 766.5 413.5 L766.5 407.0" fill="none" stroke="#ea8048" stroke-width="2.0"/><circle cx="706.1" cy="348.8" r="14" fill="#55556a" fill-opacity="0.35"/><circle cx="704.6" cy="346.8" r="13.8" fill="url(#gBall)"/><text x="704.6" y="351.40000000000003" font-family="Liberation Sans, sans-serif" font-size="13.2" font-weight="bold" fill="#111" text-anchor="middle">23</text><circle cx="768.0" cy="348.8" r="14" fill="#55556a" fill-opacity="0.35"/><circle cx="766.5" cy="346.8" r="13.8" fill="url(#gBall)"/><text x="766.5" y="351.40000000000003" font-family="Liberation Sans, sans-serif" font-size="13.2" font-weight="bold" fill="#111" text-anchor="middle">24</text><circle cx="706.1" cy="397.4" r="14" fill="#55556a" fill-opacity="0.35"/><circle cx="704.6" cy="395.4" r="13.8" fill="url(#gBall)"/><text x="704.6" y="400.0" font-family="Liberation Sans, sans-serif" font-size="13.2" font-weight="bold" fill="#111" text-anchor="middle">22</text><circle cx="768.0" cy="397.4" r="14" fill="#55556a" fill-opacity="0.35"/><circle cx="766.5" cy="395.4" r="13.8" fill="url(#gBall2)"/><text x="766.5" y="400.0" font-family="Liberation Sans, sans-serif" font-size="13.2" font-weight="bold" fill="#111" text-anchor="middle">21</text><ellipse cx="732.4" cy="346.8" rx="3.2" ry="3.8" fill="#2b3583"/><ellipse cx="732.4" cy="395.4" rx="3.2" ry="3.8" fill="#2b3583"/><rect x="742.2" y="362.6" width="6" height="8" rx="2.6" fill="#f08030" stroke="#b45a1c" stroke-width="0.6"/><rect x="742.2" y="411" width="6" height="8" rx="2.6" fill="#f08030" stroke="#b45a1c" stroke-width="0.6"/><polygon points="742.0,375.9 745.2,385.4 748.4,375.9" fill="#77779a" fill-opacity="0.4" transform="translate(1.6,1.8)"/><polygon points="742.0,375.9 745.2,385.4 748.4,375.9" fill="#2e2e80" stroke="#1c1c50" stroke-width="0.5"/><polygon points="631.2,297.4 640.8,300.8 631.2,304.2" fill="#77779a" fill-opacity="0.4" transform="translate(1.6,1.8)"/><polygon points="631.2,297.4 640.8,300.8 631.2,304.2" fill="#2e2e80" stroke="#1c1c50" stroke-width="0.5"/><polygon points="671.1,362.7 674.5,372.3 677.9,362.7" fill="#77779a" fill-opacity="0.4" transform="translate(1.6,1.8)"/><polygon points="671.1,362.7 674.5,372.3 677.9,362.7" fill="#2e2e80" stroke="#1c1c50" stroke-width="0.5"/><polygon points="628.2,424.2 637.8,427.6 628.2,431.0" fill="#77779a" fill-opacity="0.4" transform="translate(1.6,1.8)"/><polygon points="628.2,424.2 637.8,427.6 628.2,431.0" fill="#2e2e80" stroke="#1c1c50" stroke-width="0.5"/><polygon points="706.7,429.3 716.3,432.7 706.7,436.1" fill="#77779a" fill-opacity="0.4" transform="translate(1.6,1.8)"/><polygon points="706.7,429.3 716.3,432.7 706.7,436.1" fill="#2e2e80" stroke="#1c1c50" stroke-width="0.5"/><polygon points="846.3,327.2 836.7,330.6 846.3,334.0" fill="#77779a" fill-opacity="0.4" transform="translate(1.6,1.8)"/><polygon points="846.3,327.2 836.7,330.6 846.3,334.0" fill="#2e2e80" stroke="#1c1c50" stroke-width="0.5"/><circle cx="674.5" cy="427.6" r="2.5" fill="#2b3583" stroke="#1c2460" stroke-width="0.6"/><circle cx="501" cy="300.8" r="2.5" fill="#2b3583" stroke="#1c2460" stroke-width="0.6"/><circle cx="550.2" cy="300.8" r="2.5" fill="#2b3583" stroke="#1c2460" stroke-width="0.6"/><circle cx="599.2" cy="300.8" r="2.5" fill="#2b3583" stroke="#1c2460" stroke-width="0.6"/><path d="M745.2 442.0 L734.0 442.0 Q728.0 442.0 728.0 448.0 L728.0 458.0" fill="none" stroke="#6b6b8c" stroke-opacity="0.33" stroke-width="2.6999999999999997" transform="translate(1.5,1.7)"/><path d="M745.2 442.0 L734.0 442.0 Q728.0 442.0 728.0 448.0 L728.0 458.0" fill="none" stroke="#ea8048" stroke-width="2.3"/><path d="M745.2 442.0 L734.0 442.0 Q728.0 442.0 728.0 448.0 L728.0 458.0" fill="none" stroke="#ffffff" stroke-opacity="0.22" stroke-width="0.83" transform="translate(-0.2,-0.25)"/><path d="M745.2 442.0 L936.0 442.0 Q942.0 442.0 942.0 436.0 L942.0 423.0" fill="none" stroke="#6b6b8c" stroke-opacity="0.33" stroke-width="2.6999999999999997" transform="translate(1.5,1.7)"/><path d="M745.2 442.0 L936.0 442.0 Q942.0 442.0 942.0 436.0 L942.0 423.0" fill="none" stroke="#ea8048" stroke-width="2.3"/><path d="M745.2 442.0 L936.0 442.0 Q942.0 442.0 942.0 436.0 L942.0 423.0" fill="none" stroke="#ffffff" stroke-opacity="0.22" stroke-width="0.83" transform="translate(-0.2,-0.25)"/><path d="M951.5 423.0 L951.5 435.0 Q951.5 442.0 958.5 442.0 L1023.6 442.0 Q1030.6 442.0 1030.6 449.0 L1030.6 608.6 Q1030.6 615.6 1023.6 615.6 L792.7 615.6 Q785.7 615.6 785.7 608.6 L785.7 578.6 Q785.7 571.6 778.7 571.6 L744.5 571.6" fill="none" stroke="#6b6b8c" stroke-opacity="0.33" stroke-width="2.6999999999999997" transform="translate(1.5,1.7)"/><path d="M951.5 423.0 L951.5 435.0 Q951.5 442.0 958.5 442.0 L1023.6 442.0 Q1030.6 442.0 1030.6 449.0 L1030.6 608.6 Q1030.6 615.6 1023.6 615.6 L792.7 615.6 Q785.7 615.6 785.7 608.6 L785.7 578.6 Q785.7 571.6 778.7 571.6 L744.5 571.6" fill="none" stroke="#ea8048" stroke-width="2.3"/><path d="M951.5 423.0 L951.5 435.0 Q951.5 442.0 958.5 442.0 L1023.6 442.0 Q1030.6 442.0 1030.6 449.0 L1030.6 608.6 Q1030.6 615.6 1023.6 615.6 L792.7 615.6 Q785.7 615.6 785.7 608.6 L785.7 578.6 Q785.7 571.6 778.7 571.6 L744.5 571.6" fill="none" stroke="#ffffff" stroke-opacity="0.22" stroke-width="0.83" transform="translate(-0.2,-0.25)"/><rect x="743" y="439.8" width="4.4" height="4.4" fill="#f08030" stroke="#a8521a" stroke-width="0.6"/><rect x="891.4" y="439.8" width="4.4" height="4.4" fill="#f08030" stroke="#a8521a" stroke-width="0.6"/><circle cx="895.1" cy="431.40000000000003" r="6.8" fill="#77779a" fill-opacity="0.4"/><rect x="892.4" y="435.8" width="2.2" height="4.4" fill="#5e5e64"/><polygon points="899.8,432.2 896.1,435.9 890.9,435.9 887.2,432.2 887.2,427.0 890.9,423.3 896.1,423.3 899.8,427.0" fill="#727278" stroke="#4e4e54" stroke-width="0.6" stroke-linejoin="round"/><circle cx="893.5" cy="429.6" r="4.9" fill="#fbfbf7" stroke="#8a8a8c" stroke-width="0.5"/><path d="M893.9 430.0 L891.1 427.20000000000005" stroke="#333" stroke-width="0.7"/><polygon points="773.2,438.6 782.8,442.0 773.2,445.4" fill="#77779a" fill-opacity="0.4" transform="translate(1.6,1.8)"/><polygon points="773.2,438.6 782.8,442.0 773.2,445.4" fill="#2e2e80" stroke="#1c1c50" stroke-width="0.5"/><polygon points="989.8,438.6 999.4,442.0 989.8,445.4" fill="#77779a" fill-opacity="0.4" transform="translate(1.6,1.8)"/><polygon points="989.8,438.6 999.4,442.0 989.8,445.4" fill="#2e2e80" stroke="#1c1c50" stroke-width="0.5"/><polygon points="1027.2,512.7 1030.6,522.3 1034.0,512.7" fill="#77779a" fill-opacity="0.4" transform="translate(1.6,1.8)"/><polygon points="1027.2,512.7 1030.6,522.3 1034.0,512.7" fill="#2e2e80" stroke="#1c1c50" stroke-width="0.5"/><polygon points="943.6,612.2 934.0,615.6 943.6,619.0" fill="#77779a" fill-opacity="0.4" transform="translate(1.6,1.8)"/><polygon points="943.6,612.2 934.0,615.6 943.6,619.0" fill="#2e2e80" stroke="#1c1c50" stroke-width="0.5"/><polygon points="815.6,612.2 806.0,615.6 815.6,619.0" fill="#77779a" fill-opacity="0.4" transform="translate(1.6,1.8)"/><polygon points="815.6,612.2 806.0,615.6 815.6,619.0" fill="#2e2e80" stroke="#1c1c50" stroke-width="0.5"/><rect x="939.3" y="405.79999999999995" width="47" height="17.4" rx="2" fill="#77779a" fill-opacity="0.38"/><rect x="936.6999999999999" y="406.4" width="2" height="9.4" rx="1" fill="#8a1e1a"/><rect x="937.6999999999999" y="403.4" width="17.6" height="16.6" rx="2.6" fill="url(#gMotor)" stroke="#5a1410" stroke-width="0.7"/><path d="M941.6999999999999 404.2 V419.2" stroke="#6a1410" stroke-width="1.1"/><path d="M942.9 404.2 V419.2" stroke="#f2685a" stroke-width="0.6"/><path d="M945.0999999999999 404.2 V419.2" stroke="#6a1410" stroke-width="1.1"/><path d="M946.3 404.2 V419.2" stroke="#f2685a" stroke-width="0.6"/><path d="M948.4999999999999 404.2 V419.2" stroke="#6a1410" stroke-width="1.1"/><path d="M949.6999999999999 404.2 V419.2" stroke="#f2685a" stroke-width="0.6"/><path d="M951.9 404.2 V419.2" stroke="#6a1410" stroke-width="1.1"/><path d="M953.1 404.2 V419.2" stroke="#f2685a" stroke-width="0.6"/><rect x="954.9" y="407.79999999999995" width="1.8" height="8" rx="0.8" fill="#c23228"/><rect x="938.9" y="420.0" width="5.4" height="2.6" rx="0.8" fill="#c2463a" stroke="#5a1410" stroke-width="0.4"/><rect x="949.3" y="420.0" width="5.4" height="2.6" rx="0.8" fill="#c2463a" stroke="#5a1410" stroke-width="0.4"/><rect x="956.5" y="410.2" width="3.2" height="2.6" fill="#b8b4ae"/><rect x="959.5" y="403.59999999999997" width="24.6" height="16.6" rx="2.2" fill="url(#gMotor)" stroke="#5a1410" stroke-width="0.7"/><path d="M963.3 406.0 H980.6999999999999" stroke="#3a1614" stroke-width="1.2"/><path d="M963.3 407.3 H980.6999999999999" stroke="#dcd2cc" stroke-width="1.1"/><path d="M963.3 409.6 H980.6999999999999" stroke="#3a1614" stroke-width="1.2"/><path d="M963.3 410.90000000000003 H980.6999999999999" stroke="#dcd2cc" stroke-width="1.1"/><path d="M963.3 413.2 H980.6999999999999" stroke="#3a1614" stroke-width="1.2"/><path d="M963.3 414.5 H980.6999999999999" stroke="#dcd2cc" stroke-width="1.1"/><path d="M963.3 416.8 H980.6999999999999" stroke="#3a1614" stroke-width="1.2"/><path d="M963.3 418.1 H980.6999999999999" stroke="#dcd2cc" stroke-width="1.1"/><rect x="958.3" y="420.59999999999997" width="27.6" height="2.8" rx="0.8" fill="#cbbfa8" stroke="#4a3a32" stroke-width="0.6"/><path d="M722.6 459.8 L727.9 466 L733.2 459.8 M727.9 466 V472.8" fill="none" stroke="#1b1b1b" stroke-width="1.6"/><path d="M449.0 480.2 L454.5 480.2 Q460.0 480.2 460.0 485.7 L460.0 541.8" fill="none" stroke="#6b6b8c" stroke-opacity="0.33" stroke-width="2.8" transform="translate(1.5,1.7)"/><path d="M449.0 480.2 L454.5 480.2 Q460.0 480.2 460.0 485.7 L460.0 541.8" fill="none" stroke="#27507f" stroke-width="2.4"/><path d="M449.0 480.2 L454.5 480.2 Q460.0 480.2 460.0 485.7 L460.0 541.8" fill="none" stroke="#ffffff" stroke-opacity="0.22" stroke-width="0.86" transform="translate(-0.2,-0.25)"/><path d="M449.0 595.0 L454.5 595.0 Q460.0 595.0 460.0 589.5 L460.0 541.8" fill="none" stroke="#6b6b8c" stroke-opacity="0.33" stroke-width="2.8" transform="translate(1.5,1.7)"/><path d="M449.0 595.0 L454.5 595.0 Q460.0 595.0 460.0 589.5 L460.0 541.8" fill="none" stroke="#27507f" stroke-width="2.4"/><path d="M449.0 595.0 L454.5 595.0 Q460.0 595.0 460.0 589.5 L460.0 541.8" fill="none" stroke="#ffffff" stroke-opacity="0.22" stroke-width="0.86" transform="translate(-0.2,-0.25)"/><path d="M460.0 541.8 L512.0 541.8" fill="none" stroke="#6b6b8c" stroke-opacity="0.33" stroke-width="2.8" transform="translate(1.5,1.7)"/><path d="M460.0 541.8 L512.0 541.8" fill="none" stroke="#27507f" stroke-width="2.4"/><path d="M460.0 541.8 L512.0 541.8" fill="none" stroke="#ffffff" stroke-opacity="0.22" stroke-width="0.86" transform="translate(-0.2,-0.25)"/><path d="M540.0 541.8 L594.0 541.8" fill="none" stroke="#6b6b8c" stroke-opacity="0.33" stroke-width="2.8" transform="translate(1.5,1.7)"/><path d="M540.0 541.8 L594.0 541.8" fill="none" stroke="#4a80b4" stroke-width="2.4"/><path d="M540.0 541.8 L594.0 541.8" fill="none" stroke="#ffffff" stroke-opacity="0.22" stroke-width="0.86" transform="translate(-0.2,-0.25)"/><path d="M648.0 541.8 L791.0 541.8" fill="none" stroke="#6b6b8c" stroke-opacity="0.33" stroke-width="2.8" transform="translate(1.5,1.7)"/><path d="M648.0 541.8 L791.0 541.8" fill="none" stroke="#4a80b4" stroke-width="2.4"/><path d="M648.0 541.8 L791.0 541.8" fill="none" stroke="#ffffff" stroke-opacity="0.22" stroke-width="0.86" transform="translate(-0.2,-0.25)"/><path d="M825.0 538.4 L881.7 538.4 Q887.4 538.4 887.4 532.7 L887.4 527.0" fill="none" stroke="#6b6b8c" stroke-opacity="0.33" stroke-width="2.8" transform="translate(1.5,1.7)"/><path d="M825.0 538.4 L881.7 538.4 Q887.4 538.4 887.4 532.7 L887.4 527.0" fill="none" stroke="#4a80b4" stroke-width="2.4"/><path d="M825.0 538.4 L881.7 538.4 Q887.4 538.4 887.4 532.7 L887.4 527.0" fill="none" stroke="#ffffff" stroke-opacity="0.22" stroke-width="0.86" transform="translate(-0.2,-0.25)"/><path d="M897.3 527.0 L897.3 532.7 Q897.3 538.4 903.0 538.4 L948.2 538.4 Q955.2 538.4 955.2 545.4 L955.2 636.6 Q955.2 643.6 962.2 643.6 L1040.0 643.6" fill="none" stroke="#6b6b8c" stroke-opacity="0.33" stroke-width="2.8" transform="translate(1.5,1.7)"/><path d="M897.3 527.0 L897.3 532.7 Q897.3 538.4 903.0 538.4 L948.2 538.4 Q955.2 538.4 955.2 545.4 L955.2 636.6 Q955.2 643.6 962.2 643.6 L1040.0 643.6" fill="none" stroke="#4a80b4" stroke-width="2.4"/><path d="M897.3 527.0 L897.3 532.7 Q897.3 538.4 903.0 538.4 L948.2 538.4 Q955.2 538.4 955.2 545.4 L955.2 636.6 Q955.2 643.6 962.2 643.6 L1040.0 643.6" fill="none" stroke="#ffffff" stroke-opacity="0.22" stroke-width="0.86" transform="translate(-0.2,-0.25)"/><path d="M955.2 601.0 L1040.0 601.0" fill="none" stroke="#6b6b8c" stroke-opacity="0.33" stroke-width="2.8" transform="translate(1.5,1.7)"/><path d="M955.2 601.0 L1040.0 601.0" fill="none" stroke="#4a80b4" stroke-width="2.4"/><path d="M955.2 601.0 L1040.0 601.0" fill="none" stroke="#ffffff" stroke-opacity="0.22" stroke-width="0.86" transform="translate(-0.2,-0.25)"/><path d="M955.2 589.4 L919.0 589.4" fill="none" stroke="#6b6b8c" stroke-opacity="0.33" stroke-width="2.8" transform="translate(1.5,1.7)"/><path d="M955.2 589.4 L919.0 589.4" fill="none" stroke="#4a80b4" stroke-width="2.4"/><path d="M955.2 589.4 L919.0 589.4" fill="none" stroke="#ffffff" stroke-opacity="0.22" stroke-width="0.86" transform="translate(-0.2,-0.25)"/><path d="M901.4 589.4 L858.8 589.4 Q851.8 589.4 851.8 596.4 L851.8 622.0" fill="none" stroke="#6b6b8c" stroke-opacity="0.33" stroke-width="2.8" transform="translate(1.5,1.7)"/><path d="M901.4 589.4 L858.8 589.4 Q851.8 589.4 851.8 596.4 L851.8 622.0" fill="none" stroke="#27507f" stroke-width="2.4"/><path d="M901.4 589.4 L858.8 589.4 Q851.8 589.4 851.8 596.4 L851.8 622.0" fill="none" stroke="#ffffff" stroke-opacity="0.22" stroke-width="0.86" transform="translate(-0.2,-0.25)"/><circle cx="460" cy="541.8" r="2.5" fill="#27507f" stroke="#1c2460" stroke-width="0.6"/><circle cx="955.2" cy="589.4" r="2.5" fill="#27507f" stroke="#1c2460" stroke-width="0.6"/><circle cx="955.2" cy="601" r="2.5" fill="#27507f" stroke="#1c2460" stroke-width="0.6"/><polygon points="456.6,507.0 460.0,516.6 463.4,507.0" fill="#77779a" fill-opacity="0.4" transform="translate(1.6,1.8)"/><polygon points="456.6,507.0 460.0,516.6 463.4,507.0" fill="#2e2e80" stroke="#1c1c50" stroke-width="0.5"/><polygon points="456.6,574.2 460.0,564.6 463.4,574.2" fill="#77779a" fill-opacity="0.4" transform="translate(1.6,1.8)"/><polygon points="456.6,574.2 460.0,564.6 463.4,574.2" fill="#2e2e80" stroke="#1c1c50" stroke-width="0.5"/><polygon points="483.8,538.4 493.4,541.8 483.8,545.2" fill="#77779a" fill-opacity="0.4" transform="translate(1.6,1.8)"/><polygon points="483.8,538.4 493.4,541.8 483.8,545.2" fill="#2e2e80" stroke="#1c1c50" stroke-width="0.5"/><polygon points="558.8,538.4 568.4,541.8 558.8,545.2" fill="#77779a" fill-opacity="0.4" transform="translate(1.6,1.8)"/><polygon points="558.8,538.4 568.4,541.8 558.8,545.2" fill="#2e2e80" stroke="#1c1c50" stroke-width="0.5"/><polygon points="739.2,538.4 748.8,541.8 739.2,545.2" fill="#77779a" fill-opacity="0.4" transform="translate(1.6,1.8)"/><polygon points="739.2,538.4 748.8,541.8 739.2,545.2" fill="#2e2e80" stroke="#1c1c50" stroke-width="0.5"/><polygon points="850.4,535.0 860.0,538.4 850.4,541.8" fill="#77779a" fill-opacity="0.4" transform="translate(1.6,1.8)"/><polygon points="850.4,535.0 860.0,538.4 850.4,541.8" fill="#2e2e80" stroke="#1c1c50" stroke-width="0.5"/><polygon points="927.8,535.0 937.4,538.4 927.8,541.8" fill="#77779a" fill-opacity="0.4" transform="translate(1.6,1.8)"/><polygon points="927.8,535.0 937.4,538.4 927.8,541.8" fill="#2e2e80" stroke="#1c1c50" stroke-width="0.5"/><polygon points="951.8,560.8 955.2,570.4 958.6,560.8" fill="#77779a" fill-opacity="0.4" transform="translate(1.6,1.8)"/><polygon points="951.8,560.8 955.2,570.4 958.6,560.8" fill="#2e2e80" stroke="#1c1c50" stroke-width="0.5"/><polygon points="943.6,586.0 934.0,589.4 943.6,592.8" fill="#77779a" fill-opacity="0.4" transform="translate(1.6,1.8)"/><polygon points="943.6,586.0 934.0,589.4 943.6,592.8" fill="#2e2e80" stroke="#1c1c50" stroke-width="0.5"/><rect x="885" y="510.59999999999997" width="47" height="17.4" rx="2" fill="#77779a" fill-opacity="0.38"/><rect x="882.4" y="511.2" width="2" height="9.4" rx="1" fill="#8a1e1a"/><rect x="883.4" y="508.2" width="17.6" height="16.6" rx="2.6" fill="url(#gMotor)" stroke="#5a1410" stroke-width="0.7"/><path d="M887.4 509.0 V524.0" stroke="#6a1410" stroke-width="1.1"/><path d="M888.6 509.0 V524.0" stroke="#f2685a" stroke-width="0.6"/><path d="M890.8 509.0 V524.0" stroke="#6a1410" stroke-width="1.1"/><path d="M892.0 509.0 V524.0" stroke="#f2685a" stroke-width="0.6"/><path d="M894.1999999999999 509.0 V524.0" stroke="#6a1410" stroke-width="1.1"/><path d="M895.4 509.0 V524.0" stroke="#f2685a" stroke-width="0.6"/><path d="M897.6 509.0 V524.0" stroke="#6a1410" stroke-width="1.1"/><path d="M898.8000000000001 509.0 V524.0" stroke="#f2685a" stroke-width="0.6"/><rect x="900.6" y="512.6" width="1.8" height="8" rx="0.8" fill="#c23228"/><rect x="884.6" y="524.8" width="5.4" height="2.6" rx="0.8" fill="#c2463a" stroke="#5a1410" stroke-width="0.4"/><rect x="895" y="524.8" width="5.4" height="2.6" rx="0.8" fill="#c2463a" stroke="#5a1410" stroke-width="0.4"/><rect x="902.2" y="515.0" width="3.2" height="2.6" fill="#b8b4ae"/><rect x="905.2" y="508.4" width="24.6" height="16.6" rx="2.2" fill="url(#gMotor)" stroke="#5a1410" stroke-width="0.7"/><path d="M909 510.8 H926.4" stroke="#3a1614" stroke-width="1.2"/><path d="M909 512.1 H926.4" stroke="#dcd2cc" stroke-width="1.1"/><path d="M909 514.4 H926.4" stroke="#3a1614" stroke-width="1.2"/><path d="M909 515.6999999999999 H926.4" stroke="#dcd2cc" stroke-width="1.1"/><path d="M909 518.0 H926.4" stroke="#3a1614" stroke-width="1.2"/><path d="M909 519.3 H926.4" stroke="#dcd2cc" stroke-width="1.1"/><path d="M909 521.6 H926.4" stroke="#3a1614" stroke-width="1.2"/><path d="M909 522.9 H926.4" stroke="#dcd2cc" stroke-width="1.1"/><rect x="904" y="525.4" width="27.6" height="2.8" rx="0.8" fill="#cbbfa8" stroke="#4a3a32" stroke-width="0.6"/><path d="M1040 598.6 H1053 V595.4 L1062 601 L1053 606.6 V603.4 H1040 Z" fill="#77779a" fill-opacity="0.35" transform="translate(1.6,1.8)"/><path d="M1040 598.6 H1053 V595.4 L1062 601 L1053 606.6 V603.4 H1040 Z" fill="#fbfbf6" stroke="#6a7a6a" stroke-width="0.8"/><path d="M1040 641.2 H1053 V638.0 L1062 643.6 L1053 649.2 V646.0 H1040 Z" fill="#77779a" fill-opacity="0.35" transform="translate(1.6,1.8)"/><path d="M1040 641.2 H1053 V638.0 L1062 643.6 L1053 649.2 V646.0 H1040 Z" fill="#fbfbf6" stroke="#6a7a6a" stroke-width="0.8"/><path d="M846.4 634.4 L852.6 642 L859 634.4 M852.6 642 V650" fill="none" stroke="#1b1b1b" stroke-width="1.7"/><path d="M851.8 622 V634.5" stroke="#1b2b4b" stroke-width="1.5"/><path d="M849 621.6 H854.6 L851.8 627.6 Z" fill="#1b2b4b"/><path d="M510.2 537.6 V546 L514.6 544 H536.8 L541.4 546 V537.6 L536.8 539.6 H514.6 Z" fill="#d2584a" stroke="#6e1e18" stroke-width="0.6"/><rect x="520.6" y="534" width="10.4" height="6" fill="#c24a3e" stroke="#6e1e18" stroke-width="0.5"/><rect x="522.2" y="526.6" width="7.2" height="7.6" fill="#9aa0a0" stroke="#3a3a3a" stroke-width="0.5"/><path d="M524.6 526.6 V534 M527 526.6 V534" stroke="#2a2a2a" stroke-width="0.9"/><rect x="516.6" y="524.6" width="18.4" height="2.4" fill="#2a2a2e"/><rect x="790.6" y="545.6" width="35.6" height="3" fill="#9aae96" stroke="#4e5e4e" stroke-width="0.5"/><rect x="793.4" y="536.6" width="30.4" height="8.6" rx="2" fill="#e6f2dc" stroke="#4e5e4e" stroke-width="0.7"/><path d="M795 539 H822" stroke="#fff" stroke-width="1.4"/><rect x="816.6" y="530" width="2.8" height="6.6" fill="#8a8a8a"/><circle cx="818" cy="524.6" r="4.4" fill="#1c1c1c"/><rect x="815.6" y="522.8" width="4.8" height="2.6" fill="#cfe0d8"/><rect x="903.2" y="587" width="17.6" height="36" fill="#77779a" fill-opacity="0.3"/><rect x="899.8" y="583.6" width="20.6" height="3.6" fill="#c6d2ba" stroke="#6e7a66" stroke-width="0.5"/><rect x="901.4" y="586.6" width="17.6" height="34.6" fill="#9ba78a" stroke="#4e5a46" stroke-width="0.8"/><path d="M901.4 586.6 L919 621.2 M919 586.6 L901.4 621.2" stroke="#6c7860" stroke-width="0.7"/><rect x="896.6" y="622" width="28" height="3.4" fill="#4e5a46"/><path d="M521.9 659.6 L521.9 672.6 Q521.9 675.6 524.9 675.6 L1040.0 675.6" fill="none" stroke="#6b6b8c" stroke-opacity="0.33" stroke-width="2.4" transform="translate(1.5,1.7)"/><path d="M521.9 659.6 L521.9 672.6 Q521.9 675.6 524.9 675.6 L1040.0 675.6" fill="none" stroke="#c4281a" stroke-width="2.0"/><polygon points="593.5,672.2 603.1,675.6 593.5,679.0" fill="#77779a" fill-opacity="0.4" transform="translate(1.6,1.8)"/><polygon points="593.5,672.2 603.1,675.6 593.5,679.0" fill="#2e2e80" stroke="#1c1c50" stroke-width="0.5"/><polygon points="819.4,672.2 829.0,675.6 819.4,679.0" fill="#77779a" fill-opacity="0.4" transform="translate(1.6,1.8)"/><polygon points="819.4,672.2 829.0,675.6 819.4,679.0" fill="#2e2e80" stroke="#1c1c50" stroke-width="0.5"/><path d="M1040 673.2 H1053 V670.0 L1062 675.6 L1053 681.2 V678.0 H1040 Z" fill="#77779a" fill-opacity="0.35" transform="translate(1.6,1.8)"/><path d="M1040 673.2 H1053 V670.0 L1062 675.6 L1053 681.2 V678.0 H1040 Z" fill="#fbfbf6" stroke="#6a7a6a" stroke-width="0.8"/><path d="M669.8 669.4 V675.4" stroke="#333" stroke-width="1"/><path d="M664 672 L669.8 675.5 L664 679 Z M675.6 672 L669.8 675.5 L675.6 679 Z" fill="#f05a4c" stroke="#7a1a14" stroke-width="0.6"/><rect x="667.8" y="662" width="4.2" height="7.4" rx="0.8" fill="#e8e4dc" stroke="#3a3a3a" stroke-width="0.7"/><path d="M669.9 663.4 V668" stroke="#9a9a94" stroke-width="1.4"/><path d="M713.4 657 V675.6" stroke="#c4281a" stroke-width="1.8"/><path d="M710.2 660.4 L713.4 665.4 L716.6 660.4 Z M710.2 670.6 L713.4 665.4 L716.6 670.6 Z" fill="#f05a4c" stroke="#7a1a14" stroke-width="0.6"/><rect x="710.8" y="672.8" width="5.4" height="5.4" rx="0.8" fill="#ee4236" stroke="#7a1a14" stroke-width="0.6"/><rect x="718.6" y="663.8" width="7" height="3.6" rx="0.6" fill="#e4e0d4" stroke="#333" stroke-width="0.7"/><path d="M722.1 663.8 V667.4" stroke="#333" stroke-width="0.6"/><path d="M715 665.6 H718.6" stroke="#333" stroke-width="0.8"/><text x="617.4" y="670.5" font-family="Liberation Sans, sans-serif" font-size="8.6" fill="#9a94c4" text-anchor="start">VP 44</text><text x="616.4" y="669.5" font-family="Liberation Sans, sans-serif" font-size="8.6" fill="#4a4a8a" text-anchor="start">VP 44</text><text x="729.9" y="670" font-family="Liberation Sans, sans-serif" font-size="8.6" fill="#9a94c4" text-anchor="start">VP</text><text x="728.9" y="669" font-family="Liberation Sans, sans-serif" font-size="8.6" fill="#4a4a8a" text-anchor="start">VP</text><rect x="596.8" y="486.6" width="53.5" height="64.2" fill="#77779a" fill-opacity="0.35"/><rect x="594.8" y="484.6" width="53.5" height="64.2" fill="url(#gTankGreen)" stroke="#3c4a40" stroke-width="0.8"/><rect x="595.1999999999999" y="513.8" width="52.7" height="34.600000000000115" fill="url(#gTankBlue)"/><path d="M594.8 513.8 H648.3" stroke="#333" stroke-opacity="0.5" stroke-width="0.6"/><rect x="594.8" y="484.6" width="53.5" height="1.6" fill="#2e3630" fill-opacity="0.75"/><path d="M588.4 485.2 V547.8" stroke="#333" stroke-width="0.9"/><path d="M586.5 486.2 H588.4" stroke="#333" stroke-width="0.6"/><path d="M586.5 492.3 H588.4" stroke="#333" stroke-width="0.6"/><path d="M586.5 498.3 H588.4" stroke="#333" stroke-width="0.6"/><path d="M586.5 504.4 H588.4" stroke="#333" stroke-width="0.6"/><path d="M586.5 510.4 H588.4" stroke="#333" stroke-width="0.6"/><path d="M586.5 516.5 H588.4" stroke="#333" stroke-width="0.6"/><path d="M586.5 522.6 H588.4" stroke="#333" stroke-width="0.6"/><path d="M586.5 528.6 H588.4" stroke="#333" stroke-width="0.6"/><path d="M586.5 534.7 H588.4" stroke="#333" stroke-width="0.6"/><path d="M586.5 540.7 H588.4" stroke="#333" stroke-width="0.6"/><path d="M586.5 546.8 H588.4" stroke="#333" stroke-width="0.6"/><path d="M585.0 486.2 H589.6" stroke="#333" stroke-width="0.8"/><text x="584.0" y="489.2" font-family="Liberation Sans, sans-serif" font-size="8.3" fill="#2a2a30" text-anchor="end">100</text><path d="M585.0 516.6 H589.6" stroke="#333" stroke-width="0.8"/><text x="584.0" y="519.6" font-family="Liberation Sans, sans-serif" font-size="8.3" fill="#2a2a30" text-anchor="end">50</text><path d="M585.0 546.8 H589.6" stroke="#333" stroke-width="0.8"/><text x="584.0" y="549.8" font-family="Liberation Sans, sans-serif" font-size="8.3" fill="#2a2a30" text-anchor="end">0</text><rect x="506.2" y="587.6" width="49" height="74" fill="#77779a" fill-opacity="0.35"/><rect x="504.2" y="585.6" width="49" height="74" fill="url(#gTankGrey)" stroke="#4a3a32" stroke-width="0.8"/><rect x="504.59999999999997" y="639.8" width="48.2" height="19.40000000000007" fill="url(#gTankRed)"/><path d="M504.2 639.8 H553.2" stroke="#333" stroke-opacity="0.5" stroke-width="0.6"/><rect x="504.2" y="585.6" width="49" height="1.6" fill="#2e3630" fill-opacity="0.75"/><path d="M497.4 587.2 V658.6" stroke="#333" stroke-width="0.9"/><path d="M495.5 588.2 H497.4" stroke="#333" stroke-width="0.6"/><path d="M495.5 593.2 H497.4" stroke="#333" stroke-width="0.6"/><path d="M495.5 598.1 H497.4" stroke="#333" stroke-width="0.6"/><path d="M495.5 603.1 H497.4" stroke="#333" stroke-width="0.6"/><path d="M495.5 608.0 H497.4" stroke="#333" stroke-width="0.6"/><path d="M495.5 613.0 H497.4" stroke="#333" stroke-width="0.6"/><path d="M495.5 617.9 H497.4" stroke="#333" stroke-width="0.6"/><path d="M495.5 622.9 H497.4" stroke="#333" stroke-width="0.6"/><path d="M495.5 627.9 H497.4" stroke="#333" stroke-width="0.6"/><path d="M495.5 632.8 H497.4" stroke="#333" stroke-width="0.6"/><path d="M495.5 637.8 H497.4" stroke="#333" stroke-width="0.6"/><path d="M495.5 642.7 H497.4" stroke="#333" stroke-width="0.6"/><path d="M495.5 647.7 H497.4" stroke="#333" stroke-width="0.6"/><path d="M495.5 652.6 H497.4" stroke="#333" stroke-width="0.6"/><path d="M495.5 657.6 H497.4" stroke="#333" stroke-width="0.6"/><path d="M494.0 588.2 H498.59999999999997" stroke="#333" stroke-width="0.8"/><text x="493.0" y="591.2" font-family="Liberation Sans, sans-serif" font-size="8.3" fill="#2a2a30" text-anchor="end">7000</text><path d="M494.0 598 H498.59999999999997" stroke="#333" stroke-width="0.8"/><text x="493.0" y="601.0" font-family="Liberation Sans, sans-serif" font-size="8.3" fill="#2a2a30" text-anchor="end">6000</text><path d="M494.0 617.8 H498.59999999999997" stroke="#333" stroke-width="0.8"/><text x="493.0" y="620.8" font-family="Liberation Sans, sans-serif" font-size="8.3" fill="#2a2a30" text-anchor="end">4000</text><path d="M494.0 637.6 H498.59999999999997" stroke="#333" stroke-width="0.8"/><text x="493.0" y="640.6" font-family="Liberation Sans, sans-serif" font-size="8.3" fill="#2a2a30" text-anchor="end">2000</text><path d="M494.0 657.6 H498.59999999999997" stroke="#333" stroke-width="0.8"/><text x="493.0" y="660.6" font-family="Liberation Sans, sans-serif" font-size="8.3" fill="#2a2a30" text-anchor="end">0</text><rect x="688.5" y="568.9" width="57.3" height="90.2" fill="#77779a" fill-opacity="0.35"/><rect x="686.5" y="566.9" width="57.3" height="90.2" fill="url(#gTankGrey)" stroke="#4a3a32" stroke-width="0.8"/><rect x="686.9" y="643" width="56.5" height="13.700000000000022" fill="url(#gTankOrange)"/><path d="M686.5 643 H743.8" stroke="#333" stroke-opacity="0.5" stroke-width="0.6"/><rect x="686.5" y="566.9" width="57.3" height="1.6" fill="#2e3630" fill-opacity="0.75"/><path d="M678.2 567.8 V657.2" stroke="#333" stroke-width="0.9"/><path d="M676.3000000000001 568.8 H678.2" stroke="#333" stroke-width="0.6"/><path d="M676.3000000000001 575.0 H678.2" stroke="#333" stroke-width="0.6"/><path d="M676.3000000000001 581.3 H678.2" stroke="#333" stroke-width="0.6"/><path d="M676.3000000000001 587.5 H678.2" stroke="#333" stroke-width="0.6"/><path d="M676.3000000000001 593.8 H678.2" stroke="#333" stroke-width="0.6"/><path d="M676.3000000000001 600.0 H678.2" stroke="#333" stroke-width="0.6"/><path d="M676.3000000000001 606.3 H678.2" stroke="#333" stroke-width="0.6"/><path d="M676.3000000000001 612.5 H678.2" stroke="#333" stroke-width="0.6"/><path d="M676.3000000000001 618.7 H678.2" stroke="#333" stroke-width="0.6"/><path d="M676.3000000000001 625.0 H678.2" stroke="#333" stroke-width="0.6"/><path d="M676.3000000000001 631.2 H678.2" stroke="#333" stroke-width="0.6"/><path d="M676.3000000000001 637.5 H678.2" stroke="#333" stroke-width="0.6"/><path d="M676.3000000000001 643.7 H678.2" stroke="#333" stroke-width="0.6"/><path d="M676.3000000000001 650.0 H678.2" stroke="#333" stroke-width="0.6"/><path d="M676.3000000000001 656.2 H678.2" stroke="#333" stroke-width="0.6"/><path d="M674.8000000000001 568.8 H679.4000000000001" stroke="#333" stroke-width="0.8"/><text x="673.8000000000001" y="571.8" font-family="Liberation Sans, sans-serif" font-size="8.3" fill="#2a2a30" text-anchor="end">7850</text><path d="M674.8000000000001 589.4 H679.4000000000001" stroke="#333" stroke-width="0.8"/><text x="673.8000000000001" y="592.4" font-family="Liberation Sans, sans-serif" font-size="8.3" fill="#2a2a30" text-anchor="end">6000</text><path d="M674.8000000000001 611.6 H679.4000000000001" stroke="#333" stroke-width="0.8"/><text x="673.8000000000001" y="614.6" font-family="Liberation Sans, sans-serif" font-size="8.3" fill="#2a2a30" text-anchor="end">4000</text><path d="M674.8000000000001 634 H679.4000000000001" stroke="#333" stroke-width="0.8"/><text x="673.8000000000001" y="637.0" font-family="Liberation Sans, sans-serif" font-size="8.3" fill="#2a2a30" text-anchor="end">2000</text><path d="M674.8000000000001 656.2 H679.4000000000001" stroke="#333" stroke-width="0.8"/><text x="673.8000000000001" y="659.2" font-family="Liberation Sans, sans-serif" font-size="8.3" fill="#2a2a30" text-anchor="end">0</text><rect x="549.6" y="582" width="3.2" height="2.2" fill="#d02a2a" stroke="#601010" stroke-width="0.4"/><rect x="686.4" y="562.8" width="3.2" height="2.2" fill="#d02a2a" stroke="#601010" stroke-width="0.4"/><rect x="740.2" y="562.8" width="3.2" height="2.2" fill="#d02a2a" stroke="#601010" stroke-width="0.4"/><rect x="350.1" y="251.60000000000002" width="17.3" height="58.7" fill="#7d7da0" fill-opacity="0.35"/><rect x="348.5" y="249.8" width="17.3" height="58.7" fill="#c6c6ea" stroke="#7c7cb0" stroke-width="0.7"/><rect x="348.5" y="282" width="17.3" height="26.5" fill="url(#gBlueLvl)"/><path d="M345.5 306.3 H367.8" stroke="#d04a4a" stroke-width="0.8"/><path d="M346.9 249.8 V308.5" stroke="#555" stroke-width="0.7"/><path d="M343.7 249.8 H346.9" stroke="#555" stroke-width="0.6"/><path d="M345.09999999999997 255.7 H346.9" stroke="#555" stroke-width="0.6"/><path d="M345.09999999999997 261.5 H346.9" stroke="#555" stroke-width="0.6"/><path d="M345.09999999999997 267.4 H346.9" stroke="#555" stroke-width="0.6"/><path d="M345.09999999999997 273.3 H346.9" stroke="#555" stroke-width="0.6"/><path d="M343.7 279.2 H346.9" stroke="#555" stroke-width="0.6"/><path d="M345.09999999999997 285.0 H346.9" stroke="#555" stroke-width="0.6"/><path d="M345.09999999999997 290.9 H346.9" stroke="#555" stroke-width="0.6"/><path d="M345.09999999999997 296.8 H346.9" stroke="#555" stroke-width="0.6"/><path d="M345.09999999999997 302.6 H346.9" stroke="#555" stroke-width="0.6"/><path d="M343.7 308.5 H346.9" stroke="#555" stroke-width="0.6"/><text x="343.29999999999995" y="254.4" font-family="Liberation Sans, sans-serif" font-size="8.8" fill="#2a2a36" text-anchor="end">10</text><text x="343.29999999999995" y="282.95000000000005" font-family="Liberation Sans, sans-serif" font-size="8.8" fill="#2a2a36" text-anchor="end">5</text><text x="343.29999999999995" y="310.7" font-family="Liberation Sans, sans-serif" font-size="8.8" fill="#2a2a36" text-anchor="end">0</text><rect x="372.9" y="252.20000000000002" width="78.89999999999999" height="58.7" fill="#6e6e90" fill-opacity="0.32"/><rect x="370.9" y="307.5" width="83.3" height="2.2" fill="#6e6e90" fill-opacity="0.32"/><rect x="373.09999999999997" y="252.20000000000002" width="74.89999999999999" height="52.300000000000004" fill="#dcdce6" stroke="#46464e" stroke-width="0.9"/><rect x="371.5" y="249.4" width="78.1" height="3.6" rx="1.2" fill="#34343c"/><rect x="380.79999999999995" y="257.7" width="12.5" height="19.5" fill="#5c5c64" stroke="#45454c" stroke-width="0.5"/><rect x="382.9" y="259.8" width="8.4" height="15" fill="#2f62c8" stroke="#1d3f8e" stroke-width="0.5"/><rect x="428.4" y="267.8" width="15.3" height="36.5" fill="#5e5e64" stroke="#44444a" stroke-width="0.5"/><rect x="430.29999999999995" y="270.0" width="11.6" height="34.300000000000004" fill="#19a9d2" stroke="#0b6f8e" stroke-width="0.5"/><rect x="432.2" y="272.0" width="7" height="12" fill="#3358c4" stroke="#1d3f8e" stroke-width="0.5"/><text x="395.4" y="266.40000000000003" font-family="Liberation Sans, sans-serif" font-size="9.2" font-weight="bold" fill="#101014" text-anchor="start">VII</text><path d="M381.8 297.90000000000003 H388.2 L391.2 302.90000000000003 V304.3 H378.8 V302.90000000000003 Z" fill="#3fa435"/><path d="M378.8 302.90000000000003 H391.2 V304.3 H378.8 Z" fill="#2a7a24"/><path d="M383.4 298.3 L381.4 302.7" stroke="#66cc54" stroke-width="1.6" stroke-opacity="0.9"/><path d="M376.2 292.70000000000005 V298.3 M393.8 292.70000000000005 V298.3" stroke="#111" stroke-width="1.3"/><path d="M376.8 295.50000000000006 L379.4 293.70000000000005 V297.3 Z M393.2 295.50000000000006 L390.6 293.70000000000005 V297.3 Z" fill="#111"/><rect x="378.8" y="292.50000000000006" width="12.4" height="6" rx="2" fill="#66cc54" stroke="#2a7a24" stroke-width="0.5"/><circle cx="381.9" cy="295.40000000000003" r="1.05" fill="#8a8a96" stroke="#4a4a52" stroke-width="0.3"/><circle cx="388.1" cy="295.40000000000003" r="1.05" fill="#8a8a96" stroke="#4a4a52" stroke-width="0.3"/><rect x="380.2" y="282.90000000000003" width="9.6" height="9.8" rx="2.2" fill="#131316"/><rect x="382.0" y="285.3" width="2.2" height="6.2" fill="#3fa435"/><rect x="385.4" y="285.3" width="2.4" height="6.2" fill="#9fe08a" fill-opacity="0.85"/><path d="M402.59999999999997 297.90000000000003 H408.99999999999994 L411.99999999999994 302.90000000000003 V304.3 H399.59999999999997 V302.90000000000003 Z" fill="#3fa435"/><path d="M399.59999999999997 302.90000000000003 H411.99999999999994 V304.3 H399.59999999999997 Z" fill="#2a7a24"/><path d="M404.19999999999993 298.3 L402.19999999999993 302.7" stroke="#66cc54" stroke-width="1.6" stroke-opacity="0.9"/><path d="M396.99999999999994 292.70000000000005 V298.3 M414.59999999999997 292.70000000000005 V298.3" stroke="#111" stroke-width="1.3"/><path d="M397.59999999999997 295.50000000000006 L400.19999999999993 293.70000000000005 V297.3 Z M413.99999999999994 295.50000000000006 L411.4 293.70000000000005 V297.3 Z" fill="#111"/><rect x="399.59999999999997" y="292.50000000000006" width="12.4" height="6" rx="2" fill="#66cc54" stroke="#2a7a24" stroke-width="0.5"/><circle cx="402.69999999999993" cy="295.40000000000003" r="1.05" fill="#8a8a96" stroke="#4a4a52" stroke-width="0.3"/><circle cx="408.9" cy="295.40000000000003" r="1.05" fill="#8a8a96" stroke="#4a4a52" stroke-width="0.3"/><rect x="400.99999999999994" y="282.90000000000003" width="9.6" height="9.8" rx="2.2" fill="#131316"/><rect x="402.79999999999995" y="285.3" width="2.2" height="6.2" fill="#3fa435"/><rect x="406.19999999999993" y="285.3" width="2.4" height="6.2" fill="#9fe08a" fill-opacity="0.85"/><path d="M425.8 297.90000000000003 H432.2 L435.2 302.90000000000003 V304.3 H422.8 V302.90000000000003 Z" fill="#3c3c44"/><path d="M422.8 302.90000000000003 H435.2 V304.3 H422.8 Z" fill="#1e1e24"/><path d="M427.4 298.3 L425.4 302.7" stroke="#55555e" stroke-width="1.6" stroke-opacity="0.9"/><path d="M420.2 292.70000000000005 V298.3 M437.8 292.70000000000005 V298.3" stroke="#111" stroke-width="1.3"/><path d="M420.8 295.50000000000006 L423.4 293.70000000000005 V297.3 Z M437.2 295.50000000000006 L434.6 293.70000000000005 V297.3 Z" fill="#111"/><rect x="422.8" y="292.50000000000006" width="12.4" height="6" rx="2" fill="#55555e" stroke="#1e1e24" stroke-width="0.5"/><circle cx="425.9" cy="295.40000000000003" r="1.05" fill="#8a8a96" stroke="#4a4a52" stroke-width="0.3"/><circle cx="432.1" cy="295.40000000000003" r="1.05" fill="#8a8a96" stroke="#4a4a52" stroke-width="0.3"/><rect x="424.2" y="282.90000000000003" width="9.6" height="9.8" rx="2.2" fill="#131316"/><rect x="426.0" y="285.3" width="2.2" height="6.2" fill="#2c2c32"/><rect x="429.4" y="285.3" width="2.4" height="6.2" fill="#6e6e78" fill-opacity="0.85"/><rect x="368.7" y="304.1" width="83.5" height="4.6" rx="1.2" fill="#4c4c55" stroke="#33333a" stroke-width="0.4"/><rect x="495.40000000000003" y="382.40000000000003" width="18.1" height="58.8" fill="#7d7da0" fill-opacity="0.35"/><rect x="493.8" y="380.6" width="18.1" height="58.8" fill="#c6c6ea" stroke="#7c7cb0" stroke-width="0.7"/><rect x="493.8" y="416" width="18.1" height="23.400000000000034" fill="url(#gBlueLvl)"/><path d="M490.8 437.20000000000005 H513.9000000000001" stroke="#d04a4a" stroke-width="0.8"/><path d="M492.2 380.6 V439.40000000000003" stroke="#555" stroke-width="0.7"/><path d="M489.0 380.6 H492.2" stroke="#555" stroke-width="0.6"/><path d="M490.4 386.5 H492.2" stroke="#555" stroke-width="0.6"/><path d="M490.4 392.4 H492.2" stroke="#555" stroke-width="0.6"/><path d="M490.4 398.2 H492.2" stroke="#555" stroke-width="0.6"/><path d="M490.4 404.1 H492.2" stroke="#555" stroke-width="0.6"/><path d="M489.0 410.0 H492.2" stroke="#555" stroke-width="0.6"/><path d="M490.4 415.9 H492.2" stroke="#555" stroke-width="0.6"/><path d="M490.4 421.8 H492.2" stroke="#555" stroke-width="0.6"/><path d="M490.4 427.6 H492.2" stroke="#555" stroke-width="0.6"/><path d="M490.4 433.5 H492.2" stroke="#555" stroke-width="0.6"/><path d="M489.0 439.4 H492.2" stroke="#555" stroke-width="0.6"/><text x="488.59999999999997" y="385.20000000000005" font-family="Liberation Sans, sans-serif" font-size="8.8" fill="#2a2a36" text-anchor="end">10</text><text x="488.59999999999997" y="413.8" font-family="Liberation Sans, sans-serif" font-size="8.8" fill="#2a2a36" text-anchor="end">5</text><text x="488.59999999999997" y="441.6" font-family="Liberation Sans, sans-serif" font-size="8.8" fill="#2a2a36" text-anchor="end">0</text><rect x="519" y="382.59999999999997" width="79.39999999999999" height="59.2" fill="#6e6e90" fill-opacity="0.32"/><rect x="517" y="438.4" width="83.8" height="2.2" fill="#6e6e90" fill-opacity="0.32"/><rect x="519.2" y="382.59999999999997" width="75.39999999999999" height="52.800000000000004" fill="#dcdce6" stroke="#46464e" stroke-width="0.9"/><rect x="517.6" y="379.8" width="78.6" height="3.6" rx="1.2" fill="#34343c"/><rect x="526.9" y="388.09999999999997" width="12.5" height="19.5" fill="#5c5c64" stroke="#45454c" stroke-width="0.5"/><rect x="529" y="390.2" width="8.4" height="15" fill="#2f62c8" stroke="#1d3f8e" stroke-width="0.5"/><rect x="574.5" y="398.2" width="15.3" height="37.0" fill="#5e5e64" stroke="#44444a" stroke-width="0.5"/><rect x="576.4" y="400.4" width="11.6" height="34.800000000000004" fill="#19a9d2" stroke="#0b6f8e" stroke-width="0.5"/><rect x="578.3" y="402.4" width="7" height="12" fill="#3358c4" stroke="#1d3f8e" stroke-width="0.5"/><text x="549" y="396.8" font-family="Liberation Sans, sans-serif" font-size="9.2" font-weight="bold" fill="#101014" text-anchor="start">I</text><path d="M527.9 428.8 H534.3000000000001 L537.3000000000001 433.8 V435.2 H524.9 V433.8 Z" fill="#c02c40"/><path d="M524.9 433.8 H537.3000000000001 V435.2 H524.9 Z" fill="#7c1626"/><path d="M529.5 429.2 L527.5 433.59999999999997" stroke="#dc4a5e" stroke-width="1.6" stroke-opacity="0.9"/><path d="M522.3000000000001 423.6 V429.2 M539.9 423.6 V429.2" stroke="#111" stroke-width="1.3"/><path d="M522.9 426.40000000000003 L525.5 424.6 V428.2 Z M539.3000000000001 426.40000000000003 L536.7 424.6 V428.2 Z" fill="#111"/><rect x="524.9" y="423.40000000000003" width="12.4" height="6" rx="2" fill="#dc4a5e" stroke="#7c1626" stroke-width="0.5"/><circle cx="528.0" cy="426.3" r="1.05" fill="#8a8a96" stroke="#4a4a52" stroke-width="0.3"/><circle cx="534.2" cy="426.3" r="1.05" fill="#8a8a96" stroke="#4a4a52" stroke-width="0.3"/><rect x="526.3000000000001" y="413.8" width="9.6" height="9.8" rx="2.2" fill="#131316"/><rect x="528.1" y="416.2" width="2.2" height="6.2" fill="#c02c40"/><rect x="531.5" y="416.2" width="2.4" height="6.2" fill="#e0788a" fill-opacity="0.85"/><path d="M548.6999999999999 428.8 H555.1 L558.1 433.8 V435.2 H545.6999999999999 V433.8 Z" fill="#c02c40"/><path d="M545.6999999999999 433.8 H558.1 V435.2 H545.6999999999999 Z" fill="#7c1626"/><path d="M550.3 429.2 L548.3 433.59999999999997" stroke="#dc4a5e" stroke-width="1.6" stroke-opacity="0.9"/><path d="M543.1 423.6 V429.2 M560.6999999999999 423.6 V429.2" stroke="#111" stroke-width="1.3"/><path d="M543.6999999999999 426.40000000000003 L546.3 424.6 V428.2 Z M560.1 426.40000000000003 L557.5 424.6 V428.2 Z" fill="#111"/><rect x="545.6999999999999" y="423.40000000000003" width="12.4" height="6" rx="2" fill="#dc4a5e" stroke="#7c1626" stroke-width="0.5"/><circle cx="548.8" cy="426.3" r="1.05" fill="#8a8a96" stroke="#4a4a52" stroke-width="0.3"/><circle cx="555.0" cy="426.3" r="1.05" fill="#8a8a96" stroke="#4a4a52" stroke-width="0.3"/><rect x="547.1" y="413.8" width="9.6" height="9.8" rx="2.2" fill="#131316"/><rect x="548.9" y="416.2" width="2.2" height="6.2" fill="#c02c40"/><rect x="552.3" y="416.2" width="2.4" height="6.2" fill="#e0788a" fill-opacity="0.85"/><path d="M571.9 428.8 H578.3000000000001 L581.3000000000001 433.8 V435.2 H568.9 V433.8 Z" fill="#3c3c44"/><path d="M568.9 433.8 H581.3000000000001 V435.2 H568.9 Z" fill="#1e1e24"/><path d="M573.5 429.2 L571.5 433.59999999999997" stroke="#55555e" stroke-width="1.6" stroke-opacity="0.9"/><path d="M566.3000000000001 423.6 V429.2 M583.9 423.6 V429.2" stroke="#111" stroke-width="1.3"/><path d="M566.9 426.40000000000003 L569.5 424.6 V428.2 Z M583.3000000000001 426.40000000000003 L580.7 424.6 V428.2 Z" fill="#111"/><rect x="568.9" y="423.40000000000003" width="12.4" height="6" rx="2" fill="#55555e" stroke="#1e1e24" stroke-width="0.5"/><circle cx="572.0" cy="426.3" r="1.05" fill="#8a8a96" stroke="#4a4a52" stroke-width="0.3"/><circle cx="578.2" cy="426.3" r="1.05" fill="#8a8a96" stroke="#4a4a52" stroke-width="0.3"/><rect x="570.3000000000001" y="413.8" width="9.6" height="9.8" rx="2.2" fill="#131316"/><rect x="572.1" y="416.2" width="2.2" height="6.2" fill="#2c2c32"/><rect x="575.5" y="416.2" width="2.4" height="6.2" fill="#6e6e78" fill-opacity="0.85"/><rect x="514.8" y="435.0" width="84.0" height="4.6" rx="1.2" fill="#4c4c55" stroke="#33333a" stroke-width="0.4"/><rect x="349.3" y="432.5" width="17.3" height="57.6" fill="#7d7da0" fill-opacity="0.35"/><rect x="347.7" y="430.7" width="17.3" height="57.6" fill="#c8d2d8" stroke="#7c7cb0" stroke-width="0.7"/><rect x="347.7" y="461.7" width="17.3" height="26.600000000000023" fill="url(#gBlueLvl)"/><path d="M344.7 486.1 H367.0" stroke="#d04a4a" stroke-width="0.8"/><path d="M346.09999999999997 430.7 V488.3" stroke="#555" stroke-width="0.7"/><path d="M342.9 430.7 H346.09999999999997" stroke="#555" stroke-width="0.6"/><path d="M344.29999999999995 436.5 H346.09999999999997" stroke="#555" stroke-width="0.6"/><path d="M344.29999999999995 442.2 H346.09999999999997" stroke="#555" stroke-width="0.6"/><path d="M344.29999999999995 448.0 H346.09999999999997" stroke="#555" stroke-width="0.6"/><path d="M344.29999999999995 453.7 H346.09999999999997" stroke="#555" stroke-width="0.6"/><path d="M342.9 459.5 H346.09999999999997" stroke="#555" stroke-width="0.6"/><path d="M344.29999999999995 465.3 H346.09999999999997" stroke="#555" stroke-width="0.6"/><path d="M344.29999999999995 471.0 H346.09999999999997" stroke="#555" stroke-width="0.6"/><path d="M344.29999999999995 476.8 H346.09999999999997" stroke="#555" stroke-width="0.6"/><path d="M344.29999999999995 482.5 H346.09999999999997" stroke="#555" stroke-width="0.6"/><path d="M342.9 488.3 H346.09999999999997" stroke="#555" stroke-width="0.6"/><text x="342.49999999999994" y="435.3" font-family="Liberation Sans, sans-serif" font-size="8.8" fill="#2a2a36" text-anchor="end">10</text><text x="342.49999999999994" y="463.3" font-family="Liberation Sans, sans-serif" font-size="8.8" fill="#2a2a36" text-anchor="end">5</text><text x="342.49999999999994" y="490.5" font-family="Liberation Sans, sans-serif" font-size="8.8" fill="#2a2a36" text-anchor="end">0</text><rect x="372.7" y="433.09999999999997" width="78.89999999999999" height="58.6" fill="#6e6e90" fill-opacity="0.32"/><rect x="370.7" y="488.3" width="83.3" height="2.2" fill="#6e6e90" fill-opacity="0.32"/><rect x="372.9" y="433.09999999999997" width="74.89999999999999" height="52.2" fill="#d9ead2" stroke="#46464e" stroke-width="0.9"/><rect x="371.3" y="430.3" width="78.1" height="3.6" rx="1.2" fill="#34343c"/><rect x="380.59999999999997" y="438.59999999999997" width="12.5" height="19.5" fill="#5c5c64" stroke="#45454c" stroke-width="0.5"/><rect x="382.7" y="440.7" width="8.4" height="15" fill="#2f62c8" stroke="#1d3f8e" stroke-width="0.5"/><rect x="428.2" y="448.7" width="15.3" height="36.400000000000006" fill="#5e5e64" stroke="#44444a" stroke-width="0.5"/><rect x="430.09999999999997" y="450.9" width="11.6" height="34.2" fill="#19a9d2" stroke="#0b6f8e" stroke-width="0.5"/><rect x="432.0" y="452.9" width="7" height="12" fill="#3358c4" stroke="#1d3f8e" stroke-width="0.5"/><text x="399.3" y="447.3" font-family="Liberation Sans, sans-serif" font-size="9.2" font-weight="bold" fill="#101014" text-anchor="start">II</text><path d="M381.6 478.70000000000005 H388.0 L391.0 483.70000000000005 V485.1 H378.6 V483.70000000000005 Z" fill="#c84a36"/><path d="M378.6 483.70000000000005 H391.0 V485.1 H378.6 Z" fill="#8a2a1c"/><path d="M383.2 479.1 L381.2 483.5" stroke="#e86a52" stroke-width="1.6" stroke-opacity="0.9"/><path d="M376.0 473.50000000000006 V479.1 M393.6 473.50000000000006 V479.1" stroke="#111" stroke-width="1.3"/><path d="M376.6 476.30000000000007 L379.2 474.50000000000006 V478.1 Z M393.0 476.30000000000007 L390.40000000000003 474.50000000000006 V478.1 Z" fill="#111"/><rect x="378.6" y="473.30000000000007" width="12.4" height="6" rx="2" fill="#e86a52" stroke="#8a2a1c" stroke-width="0.5"/><circle cx="381.7" cy="476.20000000000005" r="1.05" fill="#8a8a96" stroke="#4a4a52" stroke-width="0.3"/><circle cx="387.90000000000003" cy="476.20000000000005" r="1.05" fill="#8a8a96" stroke="#4a4a52" stroke-width="0.3"/><rect x="380.0" y="463.70000000000005" width="9.6" height="9.8" rx="2.2" fill="#131316"/><rect x="381.8" y="466.1" width="2.2" height="6.2" fill="#c84a36"/><rect x="385.2" y="466.1" width="2.4" height="6.2" fill="#f5a894" fill-opacity="0.85"/><path d="M402.4 478.70000000000005 H408.79999999999995 L411.79999999999995 483.70000000000005 V485.1 H399.4 V483.70000000000005 Z" fill="#c84a36"/><path d="M399.4 483.70000000000005 H411.79999999999995 V485.1 H399.4 Z" fill="#8a2a1c"/><path d="M403.99999999999994 479.1 L401.99999999999994 483.5" stroke="#e86a52" stroke-width="1.6" stroke-opacity="0.9"/><path d="M396.79999999999995 473.50000000000006 V479.1 M414.4 473.50000000000006 V479.1" stroke="#111" stroke-width="1.3"/><path d="M397.4 476.30000000000007 L399.99999999999994 474.50000000000006 V478.1 Z M413.79999999999995 476.30000000000007 L411.2 474.50000000000006 V478.1 Z" fill="#111"/><rect x="399.4" y="473.30000000000007" width="12.4" height="6" rx="2" fill="#e86a52" stroke="#8a2a1c" stroke-width="0.5"/><circle cx="402.49999999999994" cy="476.20000000000005" r="1.05" fill="#8a8a96" stroke="#4a4a52" stroke-width="0.3"/><circle cx="408.7" cy="476.20000000000005" r="1.05" fill="#8a8a96" stroke="#4a4a52" stroke-width="0.3"/><rect x="400.79999999999995" y="463.70000000000005" width="9.6" height="9.8" rx="2.2" fill="#131316"/><rect x="402.59999999999997" y="466.1" width="2.2" height="6.2" fill="#c84a36"/><rect x="405.99999999999994" y="466.1" width="2.4" height="6.2" fill="#f5a894" fill-opacity="0.85"/><path d="M425.6 478.70000000000005 H432.0 L435.0 483.70000000000005 V485.1 H422.6 V483.70000000000005 Z" fill="#c84a36"/><path d="M422.6 483.70000000000005 H435.0 V485.1 H422.6 Z" fill="#8a2a1c"/><path d="M427.2 479.1 L425.2 483.5" stroke="#e86a52" stroke-width="1.6" stroke-opacity="0.9"/><path d="M420.0 473.50000000000006 V479.1 M437.6 473.50000000000006 V479.1" stroke="#111" stroke-width="1.3"/><path d="M420.6 476.30000000000007 L423.2 474.50000000000006 V478.1 Z M437.0 476.30000000000007 L434.40000000000003 474.50000000000006 V478.1 Z" fill="#111"/><rect x="422.6" y="473.30000000000007" width="12.4" height="6" rx="2" fill="#e86a52" stroke="#8a2a1c" stroke-width="0.5"/><circle cx="425.7" cy="476.20000000000005" r="1.05" fill="#8a8a96" stroke="#4a4a52" stroke-width="0.3"/><circle cx="431.90000000000003" cy="476.20000000000005" r="1.05" fill="#8a8a96" stroke="#4a4a52" stroke-width="0.3"/><rect x="424.0" y="463.70000000000005" width="9.6" height="9.8" rx="2.2" fill="#131316"/><rect x="425.8" y="466.1" width="2.2" height="6.2" fill="#c84a36"/><rect x="429.2" y="466.1" width="2.4" height="6.2" fill="#f5a894" fill-opacity="0.85"/><rect x="368.5" y="484.90000000000003" width="83.5" height="4.6" rx="1.2" fill="#4c4c55" stroke="#33333a" stroke-width="0.4"/><rect x="349.3" y="546.0999999999999" width="17.3" height="58" fill="#7d7da0" fill-opacity="0.35"/><rect x="347.7" y="544.3" width="17.3" height="58" fill="#c8d2d8" stroke="#7c7cb0" stroke-width="0.7"/><rect x="347.7" y="587.7" width="17.3" height="14.599999999999909" fill="url(#gBlueLvl)"/><path d="M344.7 600.0999999999999 H367.0" stroke="#d04a4a" stroke-width="0.8"/><path d="M346.09999999999997 544.3 V602.3" stroke="#555" stroke-width="0.7"/><path d="M342.9 544.3 H346.09999999999997" stroke="#555" stroke-width="0.6"/><path d="M344.29999999999995 550.1 H346.09999999999997" stroke="#555" stroke-width="0.6"/><path d="M344.29999999999995 555.9 H346.09999999999997" stroke="#555" stroke-width="0.6"/><path d="M344.29999999999995 561.7 H346.09999999999997" stroke="#555" stroke-width="0.6"/><path d="M344.29999999999995 567.5 H346.09999999999997" stroke="#555" stroke-width="0.6"/><path d="M342.9 573.3 H346.09999999999997" stroke="#555" stroke-width="0.6"/><path d="M344.29999999999995 579.1 H346.09999999999997" stroke="#555" stroke-width="0.6"/><path d="M344.29999999999995 584.9 H346.09999999999997" stroke="#555" stroke-width="0.6"/><path d="M344.29999999999995 590.7 H346.09999999999997" stroke="#555" stroke-width="0.6"/><path d="M344.29999999999995 596.5 H346.09999999999997" stroke="#555" stroke-width="0.6"/><path d="M342.9 602.3 H346.09999999999997" stroke="#555" stroke-width="0.6"/><text x="342.49999999999994" y="548.9" font-family="Liberation Sans, sans-serif" font-size="8.8" fill="#2a2a36" text-anchor="end">10</text><text x="342.49999999999994" y="577.0999999999999" font-family="Liberation Sans, sans-serif" font-size="8.8" fill="#2a2a36" text-anchor="end">5</text><text x="342.49999999999994" y="604.5" font-family="Liberation Sans, sans-serif" font-size="8.8" fill="#2a2a36" text-anchor="end">0</text><rect x="372.7" y="546.6999999999999" width="78.89999999999999" height="58" fill="#6e6e90" fill-opacity="0.32"/><rect x="370.7" y="601.3" width="83.3" height="2.2" fill="#6e6e90" fill-opacity="0.32"/><rect x="372.9" y="546.6999999999999" width="74.89999999999999" height="51.6" fill="#d9ead2" stroke="#46464e" stroke-width="0.9"/><rect x="371.3" y="543.9" width="78.1" height="3.6" rx="1.2" fill="#34343c"/><rect x="380.59999999999997" y="552.1999999999999" width="12.5" height="19.5" fill="#5c5c64" stroke="#45454c" stroke-width="0.5"/><rect x="382.7" y="554.3" width="8.4" height="15" fill="#2f62c8" stroke="#1d3f8e" stroke-width="0.5"/><rect x="428.2" y="562.3" width="15.3" height="35.8" fill="#5e5e64" stroke="#44444a" stroke-width="0.5"/><rect x="430.09999999999997" y="564.5" width="11.6" height="33.6" fill="#19a9d2" stroke="#0b6f8e" stroke-width="0.5"/><rect x="432.0" y="566.5" width="7" height="12" fill="#3358c4" stroke="#1d3f8e" stroke-width="0.5"/><text x="399.3" y="560.9" font-family="Liberation Sans, sans-serif" font-size="9.2" font-weight="bold" fill="#101014" text-anchor="start">V</text><path d="M381.6 591.6999999999999 H388.0 L391.0 596.6999999999999 V598.0999999999999 H378.6 V596.6999999999999 Z" fill="#c84a36"/><path d="M378.6 596.6999999999999 H391.0 V598.0999999999999 H378.6 Z" fill="#8a2a1c"/><path d="M383.2 592.0999999999999 L381.2 596.4999999999999" stroke="#e86a52" stroke-width="1.6" stroke-opacity="0.9"/><path d="M376.0 586.4999999999999 V592.0999999999999 M393.6 586.4999999999999 V592.0999999999999" stroke="#111" stroke-width="1.3"/><path d="M376.6 589.3 L379.2 587.4999999999999 V591.0999999999999 Z M393.0 589.3 L390.40000000000003 587.4999999999999 V591.0999999999999 Z" fill="#111"/><rect x="378.6" y="586.3" width="12.4" height="6" rx="2" fill="#e86a52" stroke="#8a2a1c" stroke-width="0.5"/><circle cx="381.7" cy="589.1999999999999" r="1.05" fill="#8a8a96" stroke="#4a4a52" stroke-width="0.3"/><circle cx="387.90000000000003" cy="589.1999999999999" r="1.05" fill="#8a8a96" stroke="#4a4a52" stroke-width="0.3"/><rect x="380.0" y="576.6999999999999" width="9.6" height="9.8" rx="2.2" fill="#131316"/><rect x="381.8" y="579.0999999999999" width="2.2" height="6.2" fill="#c84a36"/><rect x="385.2" y="579.0999999999999" width="2.4" height="6.2" fill="#f5a894" fill-opacity="0.85"/><path d="M402.4 591.6999999999999 H408.79999999999995 L411.79999999999995 596.6999999999999 V598.0999999999999 H399.4 V596.6999999999999 Z" fill="#c84a36"/><path d="M399.4 596.6999999999999 H411.79999999999995 V598.0999999999999 H399.4 Z" fill="#8a2a1c"/><path d="M403.99999999999994 592.0999999999999 L401.99999999999994 596.4999999999999" stroke="#e86a52" stroke-width="1.6" stroke-opacity="0.9"/><path d="M396.79999999999995 586.4999999999999 V592.0999999999999 M414.4 586.4999999999999 V592.0999999999999" stroke="#111" stroke-width="1.3"/><path d="M397.4 589.3 L399.99999999999994 587.4999999999999 V591.0999999999999 Z M413.79999999999995 589.3 L411.2 587.4999999999999 V591.0999999999999 Z" fill="#111"/><rect x="399.4" y="586.3" width="12.4" height="6" rx="2" fill="#e86a52" stroke="#8a2a1c" stroke-width="0.5"/><circle cx="402.49999999999994" cy="589.1999999999999" r="1.05" fill="#8a8a96" stroke="#4a4a52" stroke-width="0.3"/><circle cx="408.7" cy="589.1999999999999" r="1.05" fill="#8a8a96" stroke="#4a4a52" stroke-width="0.3"/><rect x="400.79999999999995" y="576.6999999999999" width="9.6" height="9.8" rx="2.2" fill="#131316"/><rect x="402.59999999999997" y="579.0999999999999" width="2.2" height="6.2" fill="#c84a36"/><rect x="405.99999999999994" y="579.0999999999999" width="2.4" height="6.2" fill="#f5a894" fill-opacity="0.85"/><path d="M425.6 591.6999999999999 H432.0 L435.0 596.6999999999999 V598.0999999999999 H422.6 V596.6999999999999 Z" fill="#2e4636"/><path d="M422.6 596.6999999999999 H435.0 V598.0999999999999 H422.6 Z" fill="#18261c"/><path d="M427.2 592.0999999999999 L425.2 596.4999999999999" stroke="#48604e" stroke-width="1.6" stroke-opacity="0.9"/><path d="M420.0 586.4999999999999 V592.0999999999999 M437.6 586.4999999999999 V592.0999999999999" stroke="#111" stroke-width="1.3"/><path d="M420.6 589.3 L423.2 587.4999999999999 V591.0999999999999 Z M437.0 589.3 L434.40000000000003 587.4999999999999 V591.0999999999999 Z" fill="#111"/><rect x="422.6" y="586.3" width="12.4" height="6" rx="2" fill="#48604e" stroke="#18261c" stroke-width="0.5"/><circle cx="425.7" cy="589.1999999999999" r="1.05" fill="#8a8a96" stroke="#4a4a52" stroke-width="0.3"/><circle cx="431.90000000000003" cy="589.1999999999999" r="1.05" fill="#8a8a96" stroke="#4a4a52" stroke-width="0.3"/><rect x="424.0" y="576.6999999999999" width="9.6" height="9.8" rx="2.2" fill="#131316"/><rect x="425.8" y="579.0999999999999" width="2.2" height="6.2" fill="#2c2c32"/><rect x="429.2" y="579.0999999999999" width="2.4" height="6.2" fill="#6e6e78" fill-opacity="0.85"/><rect x="368.5" y="597.9" width="83.5" height="4.6" rx="1.2" fill="#4c4c55" stroke="#33333a" stroke-width="0.4"/><rect x="945.6" y="280.7" width="78.69999999999999" height="59" fill="#6e6e90" fill-opacity="0.32"/><rect x="943.6" y="336.3" width="83.1" height="2.2" fill="#6e6e90" fill-opacity="0.32"/><rect x="945.8000000000001" y="280.7" width="74.69999999999999" height="52.6" fill="#dcdce6" stroke="#46464e" stroke-width="0.9"/><rect x="944.2" y="277.90000000000003" width="77.89999999999999" height="3.6" rx="1.2" fill="#34343c"/><rect x="953.5" y="286.2" width="12.5" height="19.5" fill="#5c5c64" stroke="#45454c" stroke-width="0.5"/><rect x="955.6" y="288.3" width="8.4" height="15" fill="#2f62c8" stroke="#1d3f8e" stroke-width="0.5"/><rect x="1001.1" y="296.3" width="15.3" height="36.8" fill="#5e5e64" stroke="#44444a" stroke-width="0.5"/><rect x="1003.0" y="298.5" width="11.6" height="34.6" fill="#19a9d2" stroke="#0b6f8e" stroke-width="0.5"/><rect x="1004.9" y="300.5" width="7" height="12" fill="#3358c4" stroke="#1d3f8e" stroke-width="0.5"/><text x="972.0" y="294.90000000000003" font-family="Liberation Sans, sans-serif" font-size="9.2" font-weight="bold" fill="#101014" text-anchor="start">VI</text><path d="M954.5 326.70000000000005 H960.9000000000001 L963.9000000000001 331.70000000000005 V333.1 H951.5 V331.70000000000005 Z" fill="#c02c40"/><path d="M951.5 331.70000000000005 H963.9000000000001 V333.1 H951.5 Z" fill="#7c1626"/><path d="M956.1 327.1 L954.1 331.5" stroke="#dc4a5e" stroke-width="1.6" stroke-opacity="0.9"/><path d="M948.9000000000001 321.50000000000006 V327.1 M966.5 321.50000000000006 V327.1" stroke="#111" stroke-width="1.3"/><path d="M949.5 324.30000000000007 L952.1 322.50000000000006 V326.1 Z M965.9000000000001 324.30000000000007 L963.3000000000001 322.50000000000006 V326.1 Z" fill="#111"/><rect x="951.5" y="321.30000000000007" width="12.4" height="6" rx="2" fill="#dc4a5e" stroke="#7c1626" stroke-width="0.5"/><circle cx="954.6" cy="324.20000000000005" r="1.05" fill="#8a8a96" stroke="#4a4a52" stroke-width="0.3"/><circle cx="960.8000000000001" cy="324.20000000000005" r="1.05" fill="#8a8a96" stroke="#4a4a52" stroke-width="0.3"/><rect x="952.9000000000001" y="311.70000000000005" width="9.6" height="9.8" rx="2.2" fill="#131316"/><rect x="954.7" y="314.1" width="2.2" height="6.2" fill="#c02c40"/><rect x="958.1" y="314.1" width="2.4" height="6.2" fill="#e0788a" fill-opacity="0.85"/><path d="M975.3 326.70000000000005 H981.7 L984.7 331.70000000000005 V333.1 H972.3 V331.70000000000005 Z" fill="#c02c40"/><path d="M972.3 331.70000000000005 H984.7 V333.1 H972.3 Z" fill="#7c1626"/><path d="M976.9 327.1 L974.9 331.5" stroke="#dc4a5e" stroke-width="1.6" stroke-opacity="0.9"/><path d="M969.7 321.50000000000006 V327.1 M987.3 321.50000000000006 V327.1" stroke="#111" stroke-width="1.3"/><path d="M970.3 324.30000000000007 L972.9 322.50000000000006 V326.1 Z M986.7 324.30000000000007 L984.1 322.50000000000006 V326.1 Z" fill="#111"/><rect x="972.3" y="321.30000000000007" width="12.4" height="6" rx="2" fill="#dc4a5e" stroke="#7c1626" stroke-width="0.5"/><circle cx="975.4" cy="324.20000000000005" r="1.05" fill="#8a8a96" stroke="#4a4a52" stroke-width="0.3"/><circle cx="981.6" cy="324.20000000000005" r="1.05" fill="#8a8a96" stroke="#4a4a52" stroke-width="0.3"/><rect x="973.7" y="311.70000000000005" width="9.6" height="9.8" rx="2.2" fill="#131316"/><rect x="975.5" y="314.1" width="2.2" height="6.2" fill="#c02c40"/><rect x="978.9" y="314.1" width="2.4" height="6.2" fill="#e0788a" fill-opacity="0.85"/><path d="M998.5 326.70000000000005 H1004.9000000000001 L1007.9000000000001 331.70000000000005 V333.1 H995.5 V331.70000000000005 Z" fill="#3c3c44"/><path d="M995.5 331.70000000000005 H1007.9000000000001 V333.1 H995.5 Z" fill="#1e1e24"/><path d="M1000.1 327.1 L998.1 331.5" stroke="#55555e" stroke-width="1.6" stroke-opacity="0.9"/><path d="M992.9000000000001 321.50000000000006 V327.1 M1010.5 321.50000000000006 V327.1" stroke="#111" stroke-width="1.3"/><path d="M993.5 324.30000000000007 L996.1 322.50000000000006 V326.1 Z M1009.9000000000001 324.30000000000007 L1007.3000000000001 322.50000000000006 V326.1 Z" fill="#111"/><rect x="995.5" y="321.30000000000007" width="12.4" height="6" rx="2" fill="#55555e" stroke="#1e1e24" stroke-width="0.5"/><circle cx="998.6" cy="324.20000000000005" r="1.05" fill="#8a8a96" stroke="#4a4a52" stroke-width="0.3"/><circle cx="1004.8000000000001" cy="324.20000000000005" r="1.05" fill="#8a8a96" stroke="#4a4a52" stroke-width="0.3"/><rect x="996.9000000000001" y="311.70000000000005" width="9.6" height="9.8" rx="2.2" fill="#131316"/><rect x="998.7" y="314.1" width="2.2" height="6.2" fill="#2c2c32"/><rect x="1002.1" y="314.1" width="2.4" height="6.2" fill="#6e6e78" fill-opacity="0.85"/><rect x="941.4" y="332.90000000000003" width="83.3" height="4.6" rx="1.2" fill="#4c4c55" stroke="#33333a" stroke-width="0.4"/><rect x="1031.1999999999998" y="280.1" width="17.4" height="59" fill="#7d7da0" fill-opacity="0.35"/><rect x="1029.6" y="278.3" width="17.4" height="59" fill="#c6c6ea" stroke="#7c7cb0" stroke-width="0.7"/><rect x="1029.6" y="311.7" width="17.4" height="25.600000000000023" fill="url(#gBlueLvl)"/><path d="M1026.6 335.1 H1049.0" stroke="#d04a4a" stroke-width="0.8"/><path d="M1048.6 278.3 V337.3" stroke="#555" stroke-width="0.7"/><path d="M1048.6 278.3 H1051.8" stroke="#555" stroke-width="0.6"/><path d="M1048.6 284.2 H1050.3999999999999" stroke="#555" stroke-width="0.6"/><path d="M1048.6 290.1 H1050.3999999999999" stroke="#555" stroke-width="0.6"/><path d="M1048.6 296.0 H1050.3999999999999" stroke="#555" stroke-width="0.6"/><path d="M1048.6 301.9 H1050.3999999999999" stroke="#555" stroke-width="0.6"/><path d="M1048.6 307.8 H1051.8" stroke="#555" stroke-width="0.6"/><path d="M1048.6 313.7 H1050.3999999999999" stroke="#555" stroke-width="0.6"/><path d="M1048.6 319.6 H1050.3999999999999" stroke="#555" stroke-width="0.6"/><path d="M1048.6 325.5 H1050.3999999999999" stroke="#555" stroke-width="0.6"/><path d="M1048.6 331.4 H1050.3999999999999" stroke="#555" stroke-width="0.6"/><path d="M1048.6 337.3 H1051.8" stroke="#555" stroke-width="0.6"/><text x="1052.3999999999999" y="282.90000000000003" font-family="Liberation Sans, sans-serif" font-size="8.8" fill="#2a2a36" text-anchor="start">10</text><text x="1052.3999999999999" y="311.6" font-family="Liberation Sans, sans-serif" font-size="8.8" fill="#2a2a36" text-anchor="start">5</text><text x="1052.3999999999999" y="339.5" font-family="Liberation Sans, sans-serif" font-size="8.8" fill="#2a2a36" text-anchor="start">0</text><path d="M485.4 306 L519.2 306 Q521.4 316 520.4 326 L521.2 330 L519.6 334 L520.2 339 L517.8 344 L518 350 L515.4 355 L514.6 361.6 L512.4 358.4 L510.2 368 L507.6 363 L505.2 370.6 L501.6 363.6 L498.6 370 L495.6 362 L492.8 366 L490.4 355 L487.2 348 L486.6 341 L483.4 335 L484 330 L481.6 325 Q482.4 314 485.4 306 Z" fill="#7474a8" fill-opacity="0.42" transform="translate(2.2,2)"/><path d="M485.4 306 L519.2 306 Q521.4 316 520.4 326 L521.2 330 L519.6 334 L520.2 339 L517.8 344 L518 350 L515.4 355 L514.6 361.6 L512.4 358.4 L510.2 368 L507.6 363 L505.2 370.6 L501.6 363.6 L498.6 370 L495.6 362 L492.8 366 L490.4 355 L487.2 348 L486.6 341 L483.4 335 L484 330 L481.6 325 Q482.4 314 485.4 306 Z" fill="#8d9294"/><path d="M485.4 306 L519.2 306 Q521.4 316 520.4 326 L521.2 330 L519.6 334 L520.2 339 L517.8 344 L518 350 L515.4 355 L514.6 361.6 L512.4 358.4 L510.2 368 L507.6 363 L505.2 370.6 L501.6 363.6 L498.6 370 L495.6 362 L492.8 366 L490.4 355 L487.2 348 L486.6 341 L483.4 335 L484 330 L481.6 325 Q482.4 314 485.4 306 Z" fill="#8d9294" filter="url(#fRock)"/><path d="M501 301 V337" stroke="#2b3583" stroke-width="1.9"/><rect x="499.2" y="335.40000000000003" width="3.6" height="2" rx="0.8" fill="#46a23a" stroke="#1e5a18" stroke-width="0.4"/><path d="M498.6 337.20000000000005 H503.4 L504.6 341.6 L505.8 346.6 H496.2 L497.4 341.6 Z" fill="#46a23a" stroke="#1e5a18" stroke-width="0.5"/><path d="M500.2 338.0 L498.6 346.0" stroke="#86dc70" stroke-width="1.5"/><rect x="495" y="346.6" width="12" height="3.2" rx="1.4" fill="#46a23a" stroke="#1e5a18" stroke-width="0.5"/><rect x="496.4" y="349.8" width="9.2" height="2.6" rx="1.2" fill="#1e5a18" fill-opacity="0.85"/><rect x="495.2" y="352.20000000000005" width="11.6" height="3" rx="1.4" fill="#46a23a" stroke="#1e5a18" stroke-width="0.5"/><circle cx="501" cy="300.8" r="2.5" fill="#2b3583" stroke="#1c2460" stroke-width="0.6"/><text x="503.4" y="296.8" font-family="Liberation Sans, sans-serif" font-size="8.8" font-weight="bold" fill="#8080b0" text-anchor="middle">VIII.</text><text x="502.2" y="295.4" font-family="Liberation Sans, sans-serif" font-size="8.8" font-weight="bold" fill="#101018" text-anchor="middle">VIII.</text><path d="M534.6 306 L568.4000000000001 306 Q570.6 316 569.6 326 L570.4000000000001 330 L568.8000000000001 334 L569.4000000000001 339 L567.0 344 L567.2 350 L564.6 355 L563.8000000000001 361.6 L561.6 358.4 L559.4000000000001 368 L556.8000000000001 363 L554.4000000000001 370.6 L550.8000000000001 363.6 L547.8000000000001 370 L544.8000000000001 362 L542.0 366 L539.6 355 L536.4000000000001 348 L535.8000000000001 341 L532.6 335 L533.2 330 L530.8000000000001 325 Q531.6 314 534.6 306 Z" fill="#7474a8" fill-opacity="0.42" transform="translate(2.2,2)"/><path d="M534.6 306 L568.4000000000001 306 Q570.6 316 569.6 326 L570.4000000000001 330 L568.8000000000001 334 L569.4000000000001 339 L567.0 344 L567.2 350 L564.6 355 L563.8000000000001 361.6 L561.6 358.4 L559.4000000000001 368 L556.8000000000001 363 L554.4000000000001 370.6 L550.8000000000001 363.6 L547.8000000000001 370 L544.8000000000001 362 L542.0 366 L539.6 355 L536.4000000000001 348 L535.8000000000001 341 L532.6 335 L533.2 330 L530.8000000000001 325 Q531.6 314 534.6 306 Z" fill="#8d9294"/><path d="M534.6 306 L568.4000000000001 306 Q570.6 316 569.6 326 L570.4000000000001 330 L568.8000000000001 334 L569.4000000000001 339 L567.0 344 L567.2 350 L564.6 355 L563.8000000000001 361.6 L561.6 358.4 L559.4000000000001 368 L556.8000000000001 363 L554.4000000000001 370.6 L550.8000000000001 363.6 L547.8000000000001 370 L544.8000000000001 362 L542.0 366 L539.6 355 L536.4000000000001 348 L535.8000000000001 341 L532.6 335 L533.2 330 L530.8000000000001 325 Q531.6 314 534.6 306 Z" fill="#8d9294" filter="url(#fRock)"/><path d="M550.2 301 V337" stroke="#2b3583" stroke-width="1.9"/><rect x="548.4000000000001" y="335.40000000000003" width="3.6" height="2" rx="0.8" fill="#cc3a4e" stroke="#6e1424" stroke-width="0.4"/><path d="M547.8000000000001 337.20000000000005 H552.6 L553.8000000000001 341.6 L555.0 346.6 H545.4000000000001 L546.6 341.6 Z" fill="#cc3a4e" stroke="#6e1424" stroke-width="0.5"/><path d="M549.4000000000001 338.0 L547.8000000000001 346.0" stroke="#f47c8c" stroke-width="1.5"/><rect x="544.2" y="346.6" width="12" height="3.2" rx="1.4" fill="#cc3a4e" stroke="#6e1424" stroke-width="0.5"/><rect x="545.6" y="349.8" width="9.2" height="2.6" rx="1.2" fill="#6e1424" fill-opacity="0.85"/><rect x="544.4000000000001" y="352.20000000000005" width="11.6" height="3" rx="1.4" fill="#cc3a4e" stroke="#6e1424" stroke-width="0.5"/><circle cx="550.2" cy="300.8" r="2.5" fill="#2b3583" stroke="#1c2460" stroke-width="0.6"/><text x="552.6" y="296.8" font-family="Liberation Sans, sans-serif" font-size="8.8" font-weight="bold" fill="#8080b0" text-anchor="middle">IX.</text><text x="551.4000000000001" y="295.4" font-family="Liberation Sans, sans-serif" font-size="8.8" font-weight="bold" fill="#101018" text-anchor="middle">IX.</text><path d="M583.6 306 L617.4000000000001 306 Q619.6 316 618.6 326 L619.4000000000001 330 L617.8000000000001 334 L618.4000000000001 339 L616.0 344 L616.2 350 L613.6 355 L612.8000000000001 361.6 L610.6 358.4 L608.4000000000001 368 L605.8000000000001 363 L603.4000000000001 370.6 L599.8000000000001 363.6 L596.8000000000001 370 L593.8000000000001 362 L591.0 366 L588.6 355 L585.4000000000001 348 L584.8000000000001 341 L581.6 335 L582.2 330 L579.8000000000001 325 Q580.6 314 583.6 306 Z" fill="#7474a8" fill-opacity="0.42" transform="translate(2.2,2)"/><path d="M583.6 306 L617.4000000000001 306 Q619.6 316 618.6 326 L619.4000000000001 330 L617.8000000000001 334 L618.4000000000001 339 L616.0 344 L616.2 350 L613.6 355 L612.8000000000001 361.6 L610.6 358.4 L608.4000000000001 368 L605.8000000000001 363 L603.4000000000001 370.6 L599.8000000000001 363.6 L596.8000000000001 370 L593.8000000000001 362 L591.0 366 L588.6 355 L585.4000000000001 348 L584.8000000000001 341 L581.6 335 L582.2 330 L579.8000000000001 325 Q580.6 314 583.6 306 Z" fill="#8d9294"/><path d="M583.6 306 L617.4000000000001 306 Q619.6 316 618.6 326 L619.4000000000001 330 L617.8000000000001 334 L618.4000000000001 339 L616.0 344 L616.2 350 L613.6 355 L612.8000000000001 361.6 L610.6 358.4 L608.4000000000001 368 L605.8000000000001 363 L603.4000000000001 370.6 L599.8000000000001 363.6 L596.8000000000001 370 L593.8000000000001 362 L591.0 366 L588.6 355 L585.4000000000001 348 L584.8000000000001 341 L581.6 335 L582.2 330 L579.8000000000001 325 Q580.6 314 583.6 306 Z" fill="#8d9294" filter="url(#fRock)"/><path d="M599.2 301 V337" stroke="#2b3583" stroke-width="1.9"/><rect x="597.4000000000001" y="335.40000000000003" width="3.6" height="2" rx="0.8" fill="#cc3a4e" stroke="#6e1424" stroke-width="0.4"/><path d="M596.8000000000001 337.20000000000005 H601.6 L602.8000000000001 341.6 L604.0 346.6 H594.4000000000001 L595.6 341.6 Z" fill="#cc3a4e" stroke="#6e1424" stroke-width="0.5"/><path d="M598.4000000000001 338.0 L596.8000000000001 346.0" stroke="#f47c8c" stroke-width="1.5"/><rect x="593.2" y="346.6" width="12" height="3.2" rx="1.4" fill="#cc3a4e" stroke="#6e1424" stroke-width="0.5"/><rect x="594.6" y="349.8" width="9.2" height="2.6" rx="1.2" fill="#6e1424" fill-opacity="0.85"/><rect x="593.4000000000001" y="352.20000000000005" width="11.6" height="3" rx="1.4" fill="#cc3a4e" stroke="#6e1424" stroke-width="0.5"/><circle cx="599.2" cy="300.8" r="2.5" fill="#2b3583" stroke="#1c2460" stroke-width="0.6"/><text x="601.6" y="296.8" font-family="Liberation Sans, sans-serif" font-size="8.8" font-weight="bold" fill="#8080b0" text-anchor="middle">X.</text><text x="600.4000000000001" y="295.4" font-family="Liberation Sans, sans-serif" font-size="8.8" font-weight="bold" fill="#101018" text-anchor="middle">X.</text><rect x="890.4" y="261" width="15.8" height="78.4" fill="#77779a" fill-opacity="0.35"/><rect x="888.3" y="258" width="15.8" height="79.4" fill="url(#gStem)" stroke="#6a6a74" stroke-width="0.6"/><circle cx="898" cy="237.6" r="24" fill="#66668c" fill-opacity="0.35"/><circle cx="896" cy="235.4" r="24" fill="url(#gSphere)" stroke="#1a1f60" stroke-width="0.7"/><path d="M876.6 221.6 A24 24 0 0 1 915.4 221.6 Z" fill="#8c8c9c"/><path d="M886 329.6 H893.2 V324.6 H897.4" fill="none" stroke="#2a3aa0" stroke-width="2.6"/><rect x="893.4" y="320.6" width="5.4" height="11.4" fill="none" stroke="#6e6e78" stroke-width="0.8"/><path d="M914.6 260 V323.8" stroke="#3a3a3a" stroke-width="0.9"/><path d="M914.6 260.0 H918.2" stroke="#3a3a3a" stroke-width="0.7"/><path d="M914.6 265.8 H916.8" stroke="#3a3a3a" stroke-width="0.7"/><path d="M914.6 271.6 H916.8" stroke="#3a3a3a" stroke-width="0.7"/><path d="M914.6 277.4 H916.8" stroke="#3a3a3a" stroke-width="0.7"/><path d="M914.6 283.2 H916.8" stroke="#3a3a3a" stroke-width="0.7"/><path d="M914.6 289.0 H918.2" stroke="#3a3a3a" stroke-width="0.7"/><path d="M914.6 294.8 H916.8" stroke="#3a3a3a" stroke-width="0.7"/><path d="M914.6 300.6 H916.8" stroke="#3a3a3a" stroke-width="0.7"/><path d="M914.6 306.4 H916.8" stroke="#3a3a3a" stroke-width="0.7"/><path d="M914.6 312.2 H916.8" stroke="#3a3a3a" stroke-width="0.7"/><path d="M914.6 318.0 H918.2" stroke="#3a3a3a" stroke-width="0.7"/><path d="M914.6 323.8 H916.8" stroke="#3a3a3a" stroke-width="0.7"/><text x="918.8" y="264" font-family="Liberation Sans, sans-serif" font-size="8.6" fill="#26262e" text-anchor="start">110</text><text x="918.8" y="298.4" font-family="Liberation Sans, sans-serif" font-size="8.6" fill="#26262e" text-anchor="start">50</text><text x="918.8" y="327.8" font-family="Liberation Sans, sans-serif" font-size="8.6" fill="#26262e" text-anchor="start">0</text><path d="M908.6 270.6 L912.6 272.8 L908.6 275 Z" fill="#d03030"/><circle cx="867.4" cy="320.2" r="6.8" fill="#77779a" fill-opacity="0.4"/><rect x="864.6999999999999" y="324.59999999999997" width="2.2" height="4.4" fill="#5e5e64"/><polygon points="872.1,321.0 868.4,324.7 863.2,324.7 859.5,321.0 859.5,315.8 863.2,312.1 868.4,312.1 872.1,315.8" fill="#727278" stroke="#4e4e54" stroke-width="0.6" stroke-linejoin="round"/><circle cx="865.8" cy="318.4" r="4.9" fill="#fbfbf7" stroke="#8a8a8c" stroke-width="0.5"/><path d="M866.1999999999999 318.79999999999995 L863.4 316.0" stroke="#333" stroke-width="0.7"/><circle cx="865.8" cy="330.6" r="2.5" fill="#2b3583" stroke="#1c2460" stroke-width="0.6"/><polygon points="686.9,304.0 739.0,304.0 807.0,421.7 922.7,421.7 922.7,394.6 1040.4,394.6 1040.4,623.3 759.6,623.3 759.6,666.0 1069.0,666.0 1069.0,683.8 472.3,683.8 472.3,560.0 796.5,560.0 796.5,605.0 1018.3,605.0 1018.3,456.0 758.8,456.0 758.8,485.2 713.3,485.2 713.3,423.3 686.9,423.3" fill="none" stroke="#ff5c00" stroke-width="1.65" stroke-dasharray="3.3 2.5"/><polygon points="330.4,407.7 455.7,407.7 455.7,470.0 659.0,470.0 659.0,495.2 969.6,495.2 969.6,584.2 1069.6,584.2 1069.6,658.0 836.7,658.0 836.7,556.7 469.2,556.7 469.2,616.7 330.4,616.7" fill="none" stroke="#087808" stroke-width="1.65" stroke-dasharray="3.3 2.5"/><polygon points="333.5,205.0 1066.9,205.0 1066.9,346.0 798.0,346.0 691.0,454.6 468.1,454.6 468.1,346.0 333.5,346.0" fill="none" stroke="#0000ff" stroke-width="1.65" stroke-dasharray="3.3 2.5"/><text transform="translate(514.2,243.1) scale(0.94,1)" x="0" y="0" font-family="Liberation Sans, sans-serif" font-size="19.6" font-weight="bold" fill="#0000f4" text-anchor="start" stroke="#0000f4" stroke-width="0.35">Phase 1</text><text transform="translate(484.4,500.2) scale(0.97,1)" x="0" y="0" font-family="Liberation Sans, sans-serif" font-size="18.8" font-weight="bold" fill="#0a700a" text-anchor="start" stroke="#0a700a" stroke-width="0.35">Phase 2</text><text transform="translate(569.6,587.3) scale(0.97,1)" x="0" y="0" font-family="Liberation Sans, sans-serif" font-size="18.8" font-weight="bold" fill="#ff6a10" text-anchor="start" stroke="#ff6a10" stroke-width="0.35">Phase 3</text></svg>
<div class="r" style="left:1899.00px;top:0.00px;width:21.00px;height:1080.00px;background:linear-gradient(90deg,#ffffff 0,#ffffff 1px,#e6e6e6 1px,#efefef 6px,#f0f0f0 100%);"></div>
<div class="r" style="left:1900.00px;top:23.00px;width:19.00px;height:880.60px;background:linear-gradient(90deg,#fbfbfb 0,#ececec 34%,#dcdcde 36%,#d6d6d9 60%,#c2c2c6 100%);border:1px solid #8e8e8e;border-radius:2.5px;box-sizing:border-box;box-shadow:inset 1px 0 0 #fdfdfd;"></div>
<div class="r" style="left:1905.00px;top:457.50px;width:9.00px;height:1.50px;background:#4a4a4a;"></div>
<div class="r" style="left:1905.00px;top:459.00px;width:9.00px;height:1.20px;background:#fafafa;"></div>
<div class="r" style="left:1905.00px;top:461.80px;width:9.00px;height:1.50px;background:#4a4a4a;"></div>
<div class="r" style="left:1905.00px;top:463.30px;width:9.00px;height:1.20px;background:#fafafa;"></div>
<div class="r" style="left:1905.00px;top:466.10px;width:9.00px;height:1.50px;background:#4a4a4a;"></div>
<div class="r" style="left:1905.00px;top:467.60px;width:9.00px;height:1.20px;background:#fafafa;"></div>
<svg width="1920" height="1080" viewBox="0 0 1920 1080"><defs><linearGradient id="sbA" x1="0" x2="1" y1="0" y2="1"><stop offset="0" stop-color="#111"/><stop offset="1" stop-color="#8a8a8a"/></linearGradient></defs><path d="M1904.8 14 L1909.4 8.8 L1914 14 Z" fill="url(#sbA)"/><path d="M1904.8 1066 L1909.4 1071.2 L1914 1066 Z" fill="url(#sbA)"/></svg>
<div class="r" style="left:0.00px;top:0.00px;width:1920.00px;height:1.00px;background:#000;"></div>
</body></html>
